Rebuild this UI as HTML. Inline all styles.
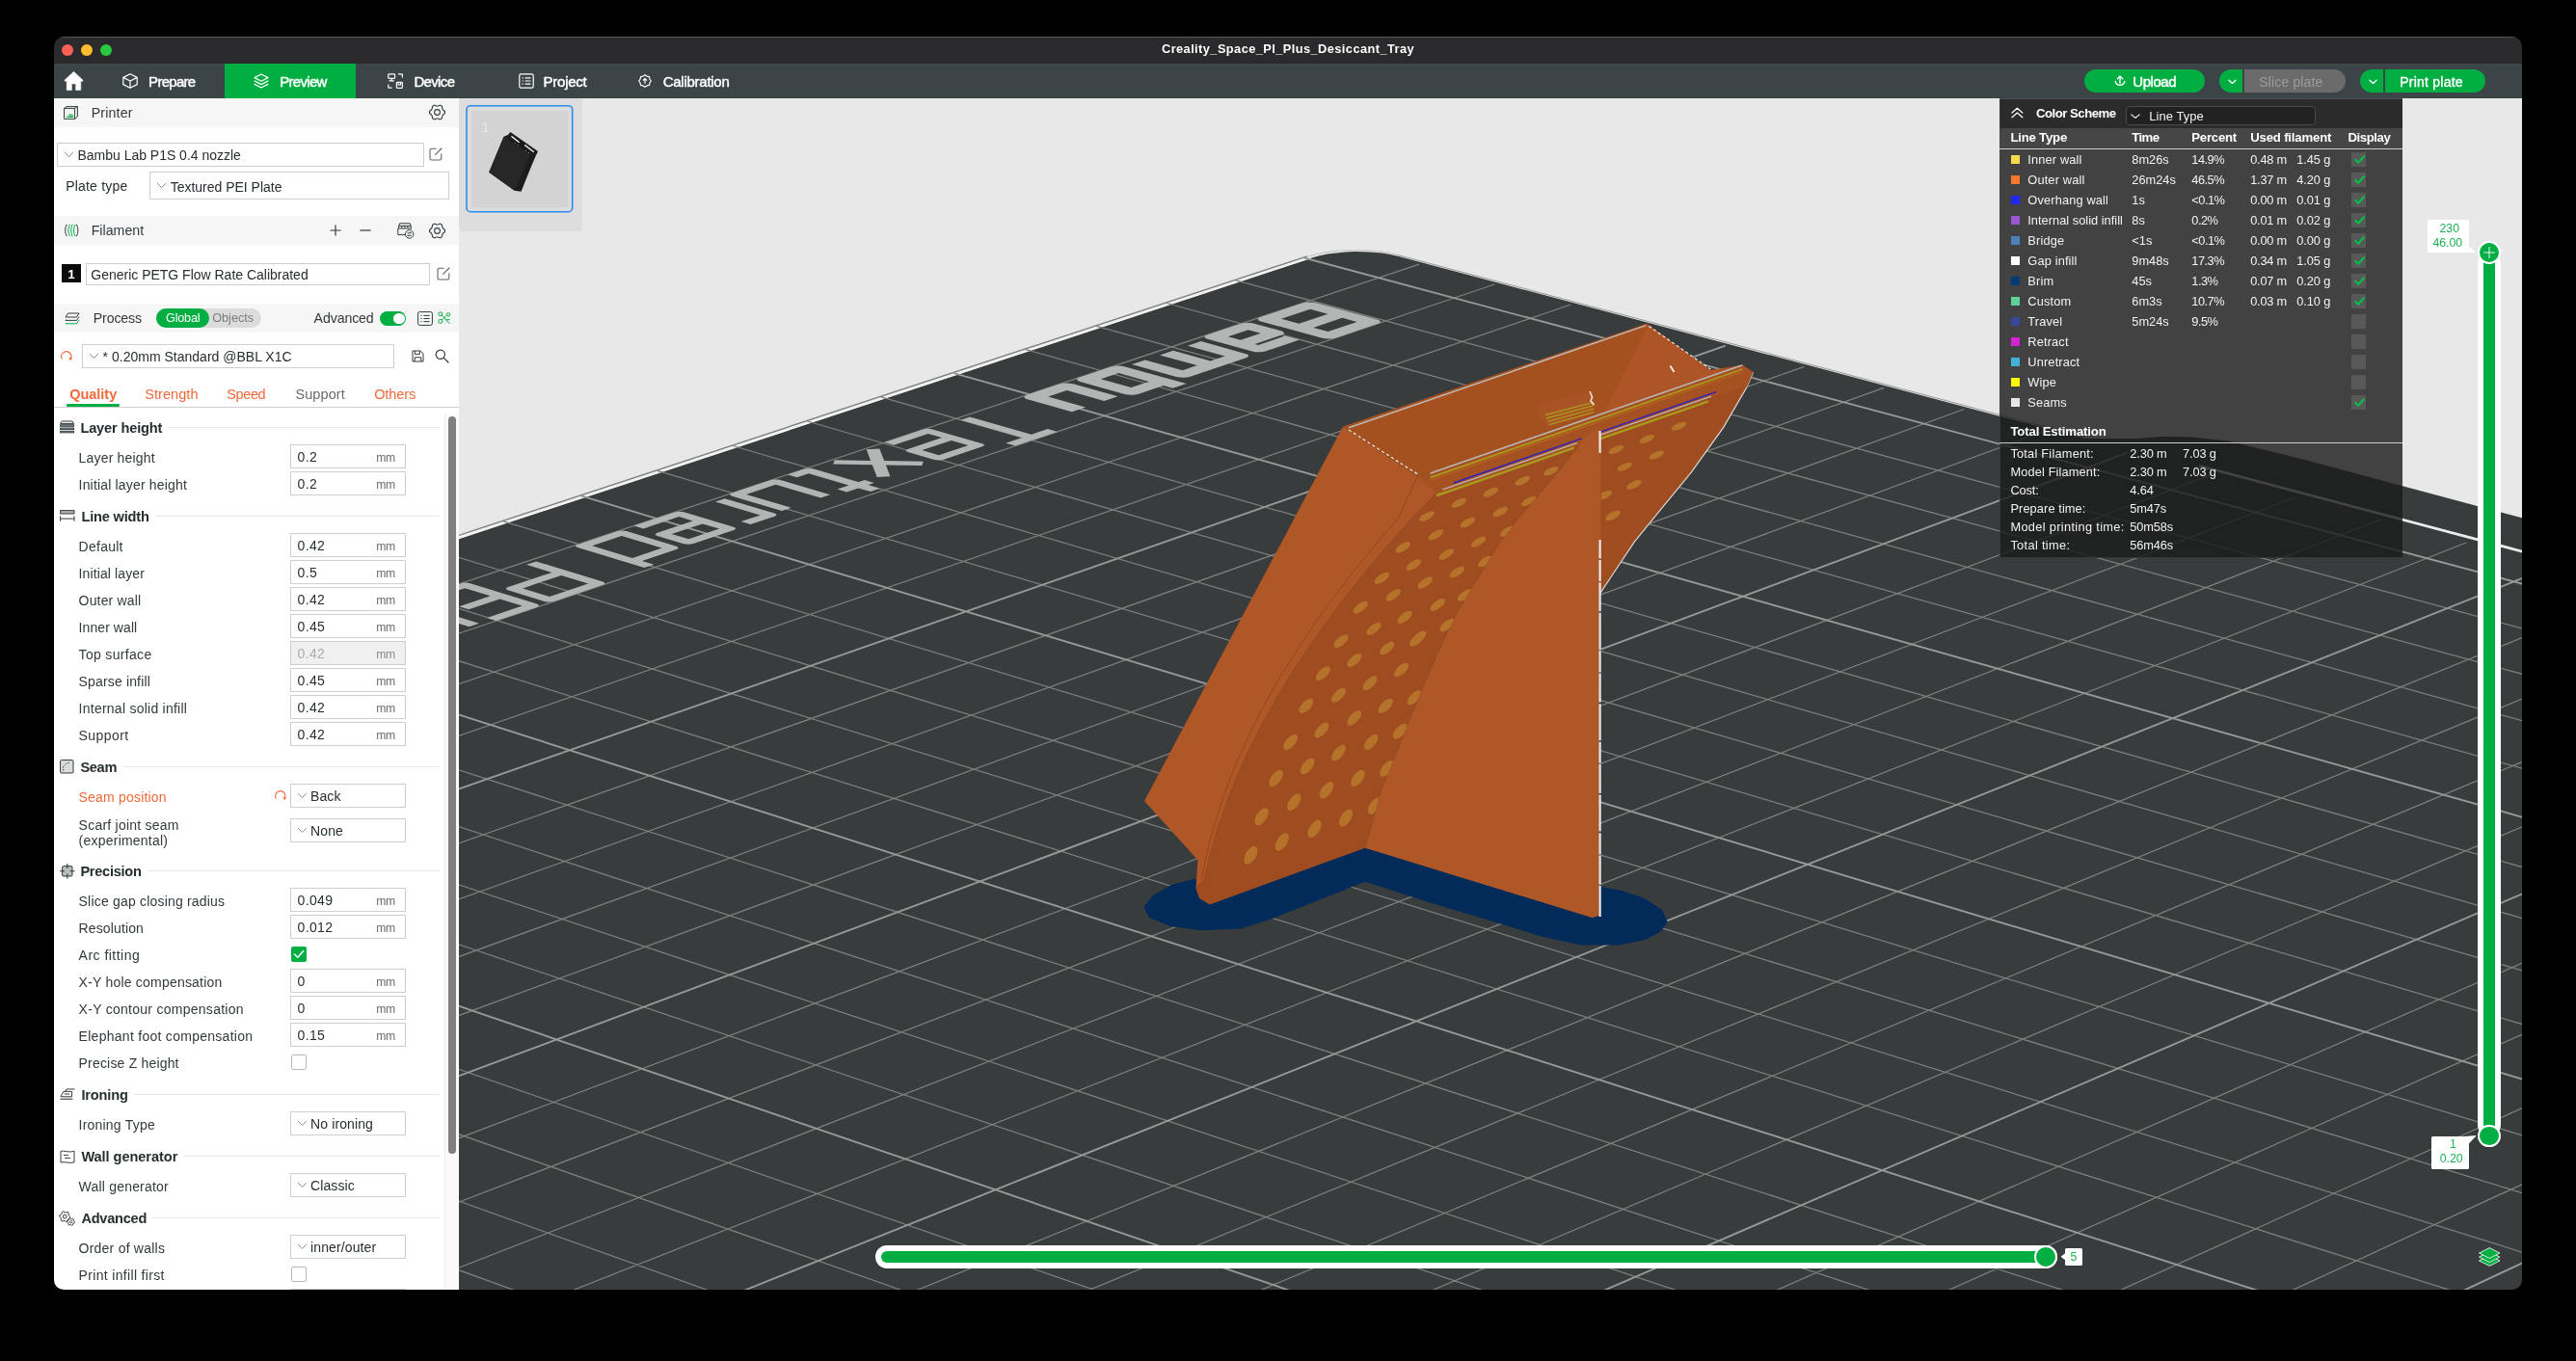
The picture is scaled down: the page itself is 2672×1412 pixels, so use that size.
<!DOCTYPE html><html><head><meta charset="utf-8"><title>Bambu Studio</title><style>
html,body{margin:0;padding:0;background:#000;}
body{width:2672px;height:1412px;overflow:hidden;position:relative;font-family:"Liberation Sans",sans-serif;color:#262e30;}
#win{position:absolute;left:0;top:0;width:2672px;height:1412px;clip-path:inset(38px 56px 74px 56px round 10px);background:#fff;will-change:transform;}
.abs{position:absolute;}
.t{position:absolute;white-space:nowrap;line-height:1;-webkit-font-smoothing:antialiased;}
svg{position:absolute;overflow:visible;}
#titlebar{position:absolute;left:56px;top:38px;width:2560px;height:28px;background:#2b2b2d;}
#tabbar{position:absolute;left:56px;top:66px;width:2560px;height:36px;background:#3b4446;}
#view{position:absolute;left:476px;top:102px;width:2140px;height:1236px;background:#e8e8e8;overflow:hidden;}
#side{position:absolute;left:56px;top:102px;width:420px;height:1236px;background:#fff;overflow:hidden;}
.hdr{position:absolute;left:0;width:420px;background:#f6f6f6;}
.box{position:absolute;border:1px solid #cfcfcf;background:#fff;box-sizing:border-box;}
.lbl{font-size:14.2px;color:#323a3d;}
.sec{font-size:14.8px;font-weight:bold;color:#262e30;}
.unit{font-size:12px;color:#6b6b6b;}
.val{font-size:14.2px;color:#262e30;}

</style></head><body>
<div id="win">
<div class="abs" style="left:56.00px;top:38.00px;width:2560.00px;height:28.00px;background:#2a2a2c;"></div>
<div class="abs" style="left:56.00px;top:38.00px;width:2560.00px;height:1.00px;background:#58585a;"></div>
<div class="abs" style="left:63.90px;top:45.90px;width:12.00px;height:12.00px;background:#fe5f57;border-radius:50%;"></div>
<div class="abs" style="left:83.90px;top:45.90px;width:12.00px;height:12.00px;background:#febc2e;border-radius:50%;"></div>
<div class="abs" style="left:104.00px;top:45.90px;width:12.00px;height:12.00px;background:#28c840;border-radius:50%;"></div>
<div class="t" style="left:1336.00px;width:0;display:flex;justify-content:center;top:45.16px;font-size:12.80px;color:#ffffff;letter-spacing:0.431px;font-weight:bold;"><span>Creality_Space_PI_Plus_Desiccant_Tray</span></div>
<div class="abs" style="left:56.00px;top:66.00px;width:2560.00px;height:36.00px;background:#3b4446;"></div>
<div class="abs" style="left:233.00px;top:66.00px;width:136.00px;height:36.00px;background:#00ae42;"></div>
<svg style="left:67.20px;top:74.20px;" width="19" height="20" viewBox="0 0 19 20"><path d="M9.5 0.3 L0.2 8.9 L0.2 10.3 L2.2 10.3 L2.2 19.6 L7.4 19.6 L7.4 13 L11.6 13 L11.6 19.6 L16.8 19.6 L16.8 10.3 L18.8 10.3 L18.8 8.9 Z" fill="#fff" stroke="#fff" stroke-width="0.5" stroke-linejoin="round"/></svg>
<svg style="left:126.80px;top:76.00px;" width="16" height="16" viewBox="0 0 16 16"><path d="M8 0.8 L15.2 4.4 L15.2 11.6 L8 15.2 L0.8 11.6 L0.8 4.4 Z M0.8 4.4 L8 8 L15.2 4.4 M8 8 L8 15.2" fill="none" stroke="#fff" stroke-width="1.2" stroke-linejoin="round"/></svg>
<div class="t" style="left:154.10px;top:76.80px;font-size:15.00px;color:#fff;letter-spacing:-0.711px;-webkit-text-stroke:0.45px #fff;">Prepare</div>
<svg style="left:262.90px;top:76.00px;" width="16" height="16" viewBox="0 0 16 16"><path d="M8 1 L15 4.6 L8 8.2 L1 4.6 Z M1 8 L8 11.6 L15 8 M1 11.4 L8 15 L15 11.4" fill="none" stroke="#fff" stroke-width="1.2" stroke-linejoin="round" stroke-linecap="round"/></svg>
<div class="t" style="left:290.20px;top:76.80px;font-size:15.00px;color:#fff;letter-spacing:-0.692px;-webkit-text-stroke:0.45px #fff;">Preview</div>
<svg style="left:402.10px;top:76.00px;" width="16.4" height="16" viewBox="0 0 16.4 16"><g fill="none" stroke="#fff" stroke-width="1.2"><rect x="0.8" y="0.8" width="6.8" height="4.6" rx="0.8"/><path d="M4.2 5.4 V7.6 M1.6 7.8 H6.8"/><path d="M11 0.8 H14.6 A0.8 0.8 0 0 1 15.4 1.6 V4.4 M0.8 11.4 V14.4 A0.8 0.8 0 0 0 1.6 15.2 H4.6"/><rect x="9.4" y="9.4" width="6" height="6" rx="0.8"/><path d="M11.2 9.6 V12 H13.6 V9.6"/></g></svg>
<div class="t" style="left:429.40px;top:76.80px;font-size:15.00px;color:#fff;letter-spacing:-0.650px;-webkit-text-stroke:0.45px #fff;">Device</div>
<svg style="left:537.70px;top:76.00px;" width="16" height="16" viewBox="0 0 16 16"><g fill="none" stroke="#fff" stroke-width="1.2"><rect x="0.8" y="0.8" width="14.4" height="14.4" rx="1.6"/><path d="M3.6 4.8 H4.8 M6.6 4.8 H12.4 M3.6 8 H4.8 M6.6 8 H12.4 M3.6 11.2 H4.8 M6.6 11.2 H12.4"/></g></svg>
<div class="t" style="left:563.60px;top:76.80px;font-size:15.00px;color:#fff;letter-spacing:-0.248px;-webkit-text-stroke:0.45px #fff;">Project</div>
<svg style="left:662.00px;top:77.00px;" width="14" height="14" viewBox="0 0 14 14"><g fill="none" stroke="#fff" stroke-width="1.2" stroke-linejoin="round"><polygon points="13.30,7.00 11.90,9.03 11.45,11.45 9.03,11.90 7.00,13.30 4.97,11.90 2.55,11.45 2.10,9.03 0.70,7.00 2.10,4.97 2.55,2.55 4.97,2.10 7.00,0.70 9.03,2.10 11.45,2.55 11.90,4.97"/><path d="M7 9.8 V4.6 M4.9 6.6 L7 4.4 L9.1 6.6"/></g></svg>
<div class="t" style="left:687.70px;top:76.80px;font-size:15.00px;color:#fff;letter-spacing:-0.261px;-webkit-text-stroke:0.45px #fff;">Calibration</div>
<div class="abs" style="left:2162.00px;top:72.00px;width:125.00px;height:24.00px;background:#00ae42;border-radius:12px;"></div>
<svg style="left:2192.80px;top:77.60px;" width="12" height="12.4" viewBox="0 0 12 12.4"><g fill="none" stroke="#fff" stroke-width="1.4" stroke-linecap="round" stroke-linejoin="round"><path d="M6 8.2 V1.2 M3.3 3.8 L6 1.1 L8.7 3.8 M1.2 6.4 A4.9 4.9 0 0 0 10.8 6.4"/></g></svg>
<div class="t" style="left:2212.30px;top:76.70px;font-size:15.00px;color:#fff;letter-spacing:-0.467px;-webkit-text-stroke:0.45px #fff;">Upload</div>
<div class="abs" style="left:2302.00px;top:72.00px;width:24.40px;height:24.00px;background:#00ae42;border-radius:12px 0 0 12px;"></div>
<div class="abs" style="left:2328.00px;top:72.00px;width:105.00px;height:24.00px;background:#6b6b6b;border-radius:0 12px 12px 0;"></div>
<svg style="left:2311.00px;top:81.60px;" width="9" height="6" viewBox="0 0 9 6"><path d="M1 1.2 L4.5 4.4 L8 1.2" fill="none" stroke="#fff" stroke-width="1.3" stroke-linecap="round" stroke-linejoin="round"/></svg>
<div class="t" style="left:2343.30px;top:77.65px;font-size:14.00px;color:#9c9c9c;letter-spacing:0.141px;">Slice plate</div>
<div class="abs" style="left:2448.00px;top:72.00px;width:24.40px;height:24.00px;background:#00ae42;border-radius:12px 0 0 12px;"></div>
<div class="abs" style="left:2474.00px;top:72.00px;width:104.00px;height:24.00px;background:#00ae42;border-radius:0 12px 12px 0;"></div>
<svg style="left:2457.00px;top:81.60px;" width="9" height="6" viewBox="0 0 9 6"><path d="M1 1.2 L4.5 4.4 L8 1.2" fill="none" stroke="#fff" stroke-width="1.3" stroke-linecap="round" stroke-linejoin="round"/></svg>
<div class="t" style="left:2489.20px;top:77.65px;font-size:14.00px;color:#fff;letter-spacing:0.236px;-webkit-text-stroke:0.35px #fff;">Print plate</div>
<div class="abs" style="left:476.00px;top:102.00px;width:2140.00px;height:1236.00px;background:#e8e8e8;"></div>
<svg style="left:476px;top:102px;overflow:hidden" width="2140" height="1236" viewBox="476 102 2140 1236"><polygon points="2159.2,454.7 2187.9,454.9 2215.8,454.9 2246.1,452.8 2273.5,453.5 2311.4,457.4 2387.8,476.3 2491.3,504.0 2569.5,525.0 2801.7,586.1 2739.8,611.3 2155.7,456.0" fill="#393c3c"/>
<path d="M-678.2,939.1 L-686.8,942.3 L-694.0,945.9 L-699.7,949.7 L-703.7,953.7 L-705.9,957.7 L-706.3,961.8 L-704.9,965.7 L-701.7,969.3 L-696.7,972.7 L-690.1,975.6 L1580.2,1814.2 L1591.2,1817.7 L1603.4,1820.4 L1616.4,1822.3 L1630.0,1823.3 L1643.8,1823.4 L1657.4,1822.6 L1670.6,1820.9 L1682.9,1818.4 L1694.1,1815.1 L1703.9,1811.1 L3659.5,882.1 L3664.9,879.0 L3668.6,875.5 L3670.6,871.8 L3670.8,868.0 L3669.1,864.1 L3665.7,860.2 L3660.7,856.5 L3654.1,853.0 L3646.1,849.8 L3637.0,847.0 L1450.0,265.8 L1442.2,264.0 L1433.6,262.6 L1424.4,261.7 L1414.7,261.2 L1404.9,261.1 L1395.2,261.5 L1385.8,262.4 L1376.9,263.6 L1368.7,265.3 L1361.6,267.3Z" fill="#393c3c"/>
<line x1="1359.7" y1="266.8" x2="-641.4" y2="925.7" stroke="#f2f2f2" stroke-width="2.6"/>
<line x1="1356.0" y1="265.8" x2="-645.1" y2="924.3" stroke="#7e8280" stroke-width="1.4"/>
<polyline points="1356.9,266.1 1364.5,264.0 1373.0,262.2 1382.3,260.9 1392.2,260.0 1402.4,259.6 1412.7,259.6 1422.9,260.2 1432.6,261.2 1441.6,262.6 1449.8,264.5" fill="none" stroke="#c4c7c6" stroke-width="1.2"/>
<line x1="1449.8" y1="264.5" x2="2161.9" y2="453.7" stroke="#8c908e" stroke-width="0.9"/>
<line x1="2281.3" y1="483.2" x2="2749.2" y2="607.4" stroke="#ececec" stroke-width="2.7"/><path d="M-643.9,978.9 L1472.2,274.2 M-624.9,918.3 L1739.1,1776.0 M-564.9,1008.0 L1550.3,295.0 M-529.2,886.8 L1833.2,1731.4 M-484.9,1037.5 L1629.3,316.0 M-434.9,855.8 L1925.7,1687.6 M-403.8,1067.3 L1709.1,337.2 M-341.9,825.2 L2016.7,1644.5 M-238.6,1128.2 L1871.4,380.4 M-159.7,765.2 L2194.4,1560.4 M-154.3,1159.2 L1953.9,402.3 M-70.4,735.8 L2281.1,1519.4 M-68.9,1190.7 L2037.4,424.5 M17.7,706.9 L2366.4,1479.0 M17.6,1222.5 L2121.7,446.9 M104.5,678.3 L2450.4,1439.2 M194.1,1287.5 L2293.3,492.6 M274.9,622.2 L2614.4,1361.6 M284.2,1320.7 L2380.6,515.8 M358.4,594.7 L2694.6,1323.6 M375.5,1354.3 L2468.8,539.2 M440.9,567.6 L2773.5,1286.2 M468.1,1388.4 L2558.1,563.0 M522.2,540.8 L2851.3,1249.4 M657.1,1458.0 L2739.8,611.3 M681.9,488.3 L3003.3,1177.5 M753.6,1493.6 L2832.2,635.9 M760.2,462.5 L3077.6,1142.3 M851.5,1529.6 L2925.7,660.8 M837.5,437.0 L3150.8,1107.6 M950.8,1566.2 L3020.3,685.9 M913.9,411.9 L3223.0,1073.4 M1153.7,1640.9 L3213.0,737.2 M1063.8,362.6 L3364.2,1006.6 M1257.4,1679.1 L3311.1,763.2 M1137.3,338.4 L3433.3,973.8 M1362.5,1717.8 L3410.4,789.6 M1210.0,314.5 L3501.5,941.6 M1469.3,1757.2 L3510.8,816.4 M1281.8,290.8 L3568.6,909.8" stroke="#7b807d" stroke-width="1.25" fill="none"/>
<path d="M-321.7,1097.6 L1789.8,358.7 M-250.2,795.0 L2106.3,1602.2 M105.3,1254.8 L2207.0,469.6 M190.3,650.0 L2533.0,1400.1 M561.9,1423.0 L2648.4,587.0 M602.6,514.4 L2927.8,1213.2 M1051.5,1603.3 L3116.1,711.4 M989.3,387.1 L3294.1,1039.7 M1577.7,1797.1 L3612.5,843.4 M1352.7,267.5 L3634.9,878.4" stroke="#959997" stroke-width="1.9" fill="none"/><path d="M1065.5,414.2 L1063.2,413.2 L1062.3,412.0 L1063.0,410.8 L1065.2,409.7 L1098.8,398.5 L1102.0,397.8 L1105.9,397.5 L1109.9,397.7 L1113.3,398.3 L1159.6,411.3 L1145.4,416.1 L1106.6,405.1 L1087.1,411.6 L1126.0,422.6 L1111.8,427.3 L1065.5,414.2Z M1310.0,365.0 L1306.1,365.3 L1302.2,365.2 L1298.8,364.6 L1252.6,351.8 L1250.3,350.9 L1249.4,349.7 L1250.0,348.5 L1252.1,347.5 L1286.8,335.9 L1290.0,335.2 L1293.8,334.9 L1297.7,335.1 L1301.1,335.7 L1328.8,343.2 L1331.1,344.2 L1332.1,345.4 L1331.5,346.5 L1329.4,347.6 L1301.6,356.9 L1305.1,357.9 L1332.9,348.5 L1347.9,352.6 L1313.2,364.3 L1310.0,365.0Z M1307.7,345.8 L1294.8,342.3 L1273.8,349.3 L1286.7,352.8 L1307.7,345.8Z M1255.6,374.5 L1270.6,369.5 L1231.8,358.7 L1245.7,354.1 L1291.9,366.9 L1294.2,367.8 L1295.2,369.0 L1294.5,370.2 L1292.5,371.3 L1234.7,390.7 L1231.4,391.4 L1227.6,391.7 L1223.6,391.6 L1220.2,390.9 L1174.0,378.0 L1187.9,373.4 L1226.7,384.2 L1241.7,379.1 L1203.0,368.4 L1216.9,363.7 L1255.6,374.5Z M1018.8,460.2 L1020.4,460.8 L1020.9,461.6 L1020.4,462.5 L1019.0,463.2 L978.9,476.7 L976.7,477.2 L974.0,477.4 L971.4,477.3 L969.1,476.9 L941.8,468.9 L940.2,468.3 L939.7,467.5 L940.2,466.6 L941.6,465.9 L977.0,454.1 L962.7,449.9 L927.3,461.7 L917.5,458.9 L957.7,445.5 L959.9,445.0 L962.5,444.8 L965.1,444.9 L967.3,445.4 L1018.8,460.2Z M956.3,467.1 L973.8,472.2 L1004.4,462.0 L986.8,456.9 L956.3,467.1Z M903.1,477.9 L898.7,466.3 L912.3,465.6 L917.2,478.1 L957.7,478.8 L956.4,483.1 L918.9,482.5 L923.4,494.2 L909.7,494.9 L904.8,482.3 L864.2,481.6 L865.7,477.3 L903.1,477.9Z M1170.0,409.6 L1166.6,408.9 L1120.3,395.9 L1118.0,394.9 L1117.1,393.8 L1117.8,392.5 L1120.0,391.5 L1152.5,380.6 L1155.8,379.9 L1159.7,379.6 L1163.6,379.8 L1167.0,380.4 L1230.6,398.1 L1216.5,402.8 L1206.7,400.1 L1181.2,408.7 L1177.9,409.4 L1174.0,409.7 L1170.0,409.6Z M1160.4,387.1 L1141.9,393.3 L1173.2,402.1 L1191.7,395.9 L1160.4,387.1Z M838.7,486.0 L841.4,486.2 L843.6,486.6 L890.2,500.3 L896.8,498.1 L906.7,500.9 L900.1,503.2 L912.6,506.8 L902.9,510.1 L890.4,506.4 L878.3,510.5 L868.5,507.6 L880.5,503.5 L838.8,491.3 L826.7,495.3 L816.9,492.4 L833.9,486.8 L836.1,486.3 L838.7,486.0Z M1429.3,335.7 L1385.7,350.5 L1382.5,351.2 L1378.7,351.5 L1374.8,351.3 L1371.4,350.7 L1307.9,333.4 L1305.6,332.4 L1304.7,331.3 L1305.3,330.1 L1307.3,329.1 L1351.0,314.5 L1354.2,313.8 L1358.0,313.5 L1361.9,313.7 L1365.2,314.3 L1428.6,331.4 L1431.0,332.4 L1431.9,333.5 L1431.3,334.7 L1429.3,335.7Z M1359.1,320.8 L1329.0,330.8 L1347.4,335.8 L1377.4,325.8 L1359.1,320.8Z M1392.3,329.8 L1362.2,339.9 L1377.6,344.1 L1407.6,334.0 L1392.3,329.8Z M1053.1,462.6 L1043.2,459.7 L1060.3,454.0 L996.4,435.7 L1005.9,432.5 L1069.8,450.8 L1086.8,445.1 L1096.6,447.9 L1053.1,462.6Z M759.3,514.7 L757.8,514.0 L757.2,513.2 L757.8,512.3 L759.3,511.6 L799.7,498.1 L802.0,497.6 L804.6,497.4 L807.3,497.5 L809.5,498.0 L861.1,513.2 L851.3,516.5 L804.6,502.7 L774.0,512.9 L820.7,526.7 L810.9,530.0 L759.3,514.7Z M761.0,546.8 L762.6,547.5 L763.1,548.3 L762.5,549.2 L761.0,549.9 L719.2,564.0 L716.9,564.5 L714.2,564.8 L711.5,564.6 L709.2,564.2 L681.7,555.9 L680.2,555.2 L679.7,554.4 L680.3,553.5 L681.8,552.8 L718.7,540.4 L704.4,536.1 L667.5,548.4 L657.6,545.5 L699.5,531.5 L701.8,531.0 L704.5,530.8 L707.2,530.9 L709.4,531.3 L761.0,546.8Z M696.7,554.1 L714.3,559.3 L746.2,548.6 L728.6,543.4 L696.7,554.1Z M291.6,707.5 L288.8,707.7 L286.1,707.6 L283.7,707.1 L232.0,690.5 L230.5,689.7 L230.1,688.8 L230.7,687.9 L232.4,687.1 L278.9,671.6 L281.3,671.0 L284.1,670.8 L286.9,670.9 L289.2,671.4 L319.7,681.2 L321.2,681.9 L321.7,682.8 L321.0,683.7 L319.4,684.5 L278.2,698.3 L289.5,701.9 L330.6,688.1 L340.6,691.3 L294.1,706.9 L291.6,707.5Z M304.2,683.1 L283.4,676.5 L247.6,688.5 L268.3,695.1 L304.2,683.1Z M227.8,725.9 L229.3,726.7 L229.7,727.6 L229.0,728.5 L227.4,729.4 L181.8,744.7 L179.3,745.3 L176.5,745.5 L173.7,745.4 L171.4,744.9 L143.8,735.9 L142.4,735.1 L141.9,734.2 L142.6,733.3 L144.3,732.4 L184.5,719.0 L170.1,714.3 L129.9,727.7 L120.1,724.5 L165.7,709.3 L168.1,708.7 L171.0,708.5 L173.7,708.6 L176.0,709.1 L227.8,725.9Z M159.7,733.9 L177.3,739.6 L212.0,728.0 L194.4,722.2 L159.7,733.9Z M778.5,544.1 L768.6,541.1 L788.6,534.4 L741.9,520.5 L751.8,517.2 L803.4,532.6 L804.9,533.2 L805.4,534.1 L804.9,534.9 L803.4,535.7 L778.5,544.1Z M597.2,566.5 L597.8,565.6 L599.3,564.9 L640.0,551.3 L642.3,550.8 L645.0,550.6 L647.7,550.7 L649.9,551.1 L701.6,566.8 L703.1,567.5 L703.6,568.3 L703.1,569.2 L701.5,569.9 L665.9,581.9 L678.4,585.7 L668.3,589.1 L599.2,568.1 L597.7,567.4 L597.2,566.5Z M686.6,568.6 L644.8,556.0 L614.2,566.2 L656.0,578.9 L686.6,568.6Z M208.7,695.9 L211.4,696.1 L213.7,696.5 L260.6,711.7 L267.9,709.2 L277.8,712.4 L270.5,714.9 L283.0,718.9 L272.2,722.5 L259.7,718.5 L246.4,723.0 L236.4,719.8 L249.8,715.3 L207.9,701.7 L194.5,706.2 L184.7,703.0 L203.4,696.7 L205.9,696.2 L208.7,695.9Z M477.7,605.4 L480.1,604.8 L482.8,604.6 L485.5,604.7 L487.8,605.2 L557.0,626.6 L558.5,627.3 L559.0,628.2 L558.4,629.1 L556.8,629.9 L515.0,644.0 L505.1,640.9 L541.7,628.6 L518.5,621.4 L486.1,632.2 L476.2,629.2 L508.6,618.3 L482.4,610.2 L445.8,622.4 L436.0,619.3 L477.7,605.4Z M486.6,650.3 L417.4,628.7 L427.8,625.2 L497.0,646.8 L486.6,650.3Z M366.5,690.8 L297.2,668.7 L307.8,665.2 L377.0,687.2 L366.5,690.8Z M574.9,623.8 L572.5,624.3 L569.8,624.6 L567.1,624.4 L564.8,624.0 L526.9,612.3 L525.4,611.6 L525.0,610.7 L525.5,609.8 L527.1,609.0 L572.4,593.9 L546.0,585.8 L556.2,582.4 L625.3,603.6 L626.8,604.3 L627.3,605.2 L626.8,606.1 L625.2,606.8 L574.9,623.8Z M542.1,610.4 L570.1,619.0 L610.2,605.5 L582.2,596.9 L542.1,610.4Z M395.3,684.3 L392.9,684.9 L390.2,685.1 L387.4,685.0 L385.1,684.5 L347.2,672.5 L345.7,671.7 L345.3,670.8 L345.9,669.9 L347.6,669.1 L394.1,653.6 L367.7,645.2 L378.2,641.7 L447.4,663.5 L448.9,664.3 L449.3,665.2 L448.7,666.1 L447.1,666.9 L395.3,684.3Z M362.7,670.5 L390.7,679.4 L431.9,665.5 L404.0,656.7 L362.7,670.5Z" fill="#b3b4b4" fill-rule="evenodd"/><defs><clipPath id="cpF"><polygon points="1490.4,510.8 1465.0,537.6 1440.9,564.3 1418.1,591.1 1396.6,617.8 1376.4,644.6 1357.4,671.4 1339.9,698.1 1323.6,724.9 1308.7,751.6 1295.2,778.4 1283.1,805.2 1272.4,831.9 1263.1,858.7 1255.3,885.4 1248.9,912.2 1240.5,922.0 1244.0,932.0 1254.9,938.5 1416.0,879.8 1419.8,867.3 1432.2,822.3 1452.2,772.4 1477.2,710.0 1499.7,660.0 1512.3,633.9 1532.5,600.8 1552.7,567.8 1574.7,538.4 1596.8,512.7 1626.1,477.8 1644.4,454.4"/></clipPath><clipPath id="cpR"><polygon points="1658.6,447.8 1818.5,386.1 1812.0,401.5 1787.7,443.4 1754.6,489.7 1723.8,527.1 1695.1,562.4 1673.1,595.5 1659.9,615.3 1658.6,615.3"/></clipPath></defs>
<polygon points="1239.9,911.5 1215.0,918.0 1196.0,929.0 1186.2,941.0 1192.0,952.0 1214.0,961.0 1244.9,965.2 1287.4,963.6 1320.0,953.0 1416.0,914.7 1489.8,938.5 1544.6,954.7 1598.5,971.5 1640.0,980.5 1680.0,980.6 1706.0,975.0 1722.0,967.0 1729.8,956.7 1724.0,944.0 1706.0,932.0 1682.0,924.0 1658.3,919.5 1655.6,940.0 1416.0,879.8 1253.3,930.0" fill="#022b5a"/>
<polygon points="1393.0,442.5 1187.0,831.1 1242.4,892.3 1240.5,922.0 1248.9,912.2 1255.3,885.4 1263.1,858.7 1272.4,831.9 1283.1,805.2 1295.2,778.4 1308.7,751.6 1323.6,724.9 1339.9,698.1 1357.4,671.4 1376.4,644.6 1396.6,617.8 1418.1,591.1 1440.9,564.3 1465.0,537.6 1490.4,510.8 1470.3,494.1" fill="#b05727"/>
<polyline points="1470.3,494.1 1450.4,537.6 1427.2,564.3 1405.2,591.1 1384.6,617.8 1365.2,644.6 1347.1,671.4 1330.4,698.1 1315.0,724.9 1300.9,751.6 1288.3,778.4 1277.1,805.2 1267.2,831.9 1258.8,858.7 1251.8,885.4 1246.3,912.2" fill="none" stroke="#8f4218" stroke-width="0.8"/>
<polygon points="1490.4,510.8 1465.0,537.6 1440.9,564.3 1418.1,591.1 1396.6,617.8 1376.4,644.6 1357.4,671.4 1339.9,698.1 1323.6,724.9 1308.7,751.6 1295.2,778.4 1283.1,805.2 1272.4,831.9 1263.1,858.7 1255.3,885.4 1248.9,912.2 1240.5,922.0 1244.0,932.0 1254.9,938.5 1416.0,879.8 1419.8,867.3 1432.2,822.3 1452.2,772.4 1477.2,710.0 1499.7,660.0 1512.3,633.9 1532.5,600.8 1552.7,567.8 1574.7,538.4 1596.8,512.7 1626.1,477.8 1644.4,454.4" fill="#9f4c20"/>
<g clip-path="url(#cpF)" fill="#b5722b"><ellipse cx="1608.7" cy="488.8" rx="8.4" ry="3.3" transform="rotate(-25 1608.7 488.8)"/><ellipse cx="1579.3" cy="498.9" rx="8.5" ry="3.4" transform="rotate(-26 1579.3 498.9)"/><ellipse cx="1546.2" cy="510.8" rx="8.6" ry="3.5" transform="rotate(-27 1546.2 510.8)"/><ellipse cx="1513.2" cy="521.8" rx="8.6" ry="3.5" transform="rotate(-28 1513.2 521.8)"/><ellipse cx="1480.1" cy="535.6" rx="8.7" ry="3.6" transform="rotate(-29 1480.1 535.6)"/><ellipse cx="1585.7" cy="520.0" rx="8.6" ry="3.5" transform="rotate(-28 1585.7 520.0)"/><ellipse cx="1556.3" cy="531.0" rx="8.6" ry="3.6" transform="rotate(-28 1556.3 531.0)"/><ellipse cx="1522.4" cy="542.0" rx="8.7" ry="3.6" transform="rotate(-29 1522.4 542.0)"/><ellipse cx="1489.3" cy="554.9" rx="8.8" ry="3.7" transform="rotate(-31 1489.3 554.9)"/><ellipse cx="1455.3" cy="567.8" rx="8.8" ry="3.8" transform="rotate(-32 1455.3 567.8)"/><ellipse cx="1563.7" cy="551.2" rx="8.7" ry="3.7" transform="rotate(-30 1563.7 551.2)"/><ellipse cx="1533.4" cy="562.3" rx="8.8" ry="3.7" transform="rotate(-31 1533.4 562.3)"/><ellipse cx="1500.3" cy="575.1" rx="8.9" ry="3.8" transform="rotate(-32 1500.3 575.1)"/><ellipse cx="1466.3" cy="586.1" rx="8.9" ry="3.9" transform="rotate(-33 1466.3 586.1)"/><ellipse cx="1433.3" cy="599.9" rx="9.0" ry="3.9" transform="rotate(-35 1433.3 599.9)"/><ellipse cx="1540.7" cy="582.5" rx="8.9" ry="3.8" transform="rotate(-33 1540.7 582.5)"/><ellipse cx="1511.3" cy="593.5" rx="9.0" ry="3.9" transform="rotate(-34 1511.3 593.5)"/><ellipse cx="1478.3" cy="604.5" rx="9.0" ry="4.0" transform="rotate(-35 1478.3 604.5)"/><ellipse cx="1445.2" cy="617.4" rx="9.1" ry="4.0" transform="rotate(-36 1445.2 617.4)"/><ellipse cx="1411.2" cy="630.2" rx="9.1" ry="4.1" transform="rotate(-37 1411.2 630.2)"/><ellipse cx="1519.6" cy="617.4" rx="9.1" ry="4.0" transform="rotate(-36 1519.6 617.4)"/><ellipse cx="1491.1" cy="627.5" rx="9.1" ry="4.1" transform="rotate(-37 1491.1 627.5)"/><ellipse cx="1457.1" cy="640.3" rx="9.2" ry="4.2" transform="rotate(-38 1457.1 640.3)"/><ellipse cx="1425.0" cy="652.3" rx="9.2" ry="4.2" transform="rotate(-39 1425.0 652.3)"/><ellipse cx="1391.0" cy="665.1" rx="9.3" ry="4.3" transform="rotate(-40 1391.0 665.1)"/><ellipse cx="1501.2" cy="648.6" rx="9.2" ry="4.2" transform="rotate(-39 1501.2 648.6)"/><ellipse cx="1471.8" cy="661.4" rx="9.3" ry="4.3" transform="rotate(-40 1471.8 661.4)"/><ellipse cx="1438.8" cy="672.5" rx="9.3" ry="4.3" transform="rotate(-41 1438.8 672.5)"/><ellipse cx="1469.7" cy="663.7" rx="9.3" ry="4.3" transform="rotate(-40 1469.7 663.7)"/><ellipse cx="1404.8" cy="685.0" rx="9.4" ry="4.4" transform="rotate(-42 1404.8 685.0)"/><ellipse cx="1453.5" cy="695.0" rx="9.4" ry="4.5" transform="rotate(-43 1453.5 695.0)"/><ellipse cx="1372.3" cy="698.7" rx="9.5" ry="4.5" transform="rotate(-43 1372.3 698.7)"/><ellipse cx="1421.0" cy="708.7" rx="9.5" ry="4.5" transform="rotate(-44 1421.0 708.7)"/><ellipse cx="1467.2" cy="723.7" rx="9.6" ry="4.6" transform="rotate(-45 1467.2 723.7)"/><ellipse cx="1388.5" cy="721.2" rx="9.6" ry="4.6" transform="rotate(-45 1388.5 721.2)"/><ellipse cx="1354.8" cy="732.4" rx="9.6" ry="4.7" transform="rotate(-46 1354.8 732.4)"/><ellipse cx="1437.2" cy="732.4" rx="9.6" ry="4.7" transform="rotate(-46 1437.2 732.4)"/><ellipse cx="1404.8" cy="744.9" rx="9.7" ry="4.7" transform="rotate(-47 1404.8 744.9)"/><ellipse cx="1371.0" cy="757.4" rx="9.8" ry="4.8" transform="rotate(-48 1371.0 757.4)"/><ellipse cx="1452.2" cy="758.7" rx="9.8" ry="4.8" transform="rotate(-48 1452.2 758.7)"/><ellipse cx="1338.6" cy="769.9" rx="9.8" ry="4.9" transform="rotate(-49 1338.6 769.9)"/><ellipse cx="1422.2" cy="769.9" rx="9.8" ry="4.9" transform="rotate(-49 1422.2 769.9)"/><ellipse cx="1388.5" cy="781.1" rx="9.9" ry="4.9" transform="rotate(-50 1388.5 781.1)"/><ellipse cx="1356.1" cy="794.9" rx="9.9" ry="5.0" transform="rotate(-52 1356.1 794.9)"/><ellipse cx="1438.5" cy="797.4" rx="9.9" ry="5.0" transform="rotate(-52 1438.5 797.4)"/><ellipse cx="1323.6" cy="807.4" rx="10.0" ry="5.1" transform="rotate(-53 1323.6 807.4)"/><ellipse cx="1408.5" cy="807.4" rx="10.0" ry="5.1" transform="rotate(-53 1408.5 807.4)"/><ellipse cx="1376.0" cy="819.8" rx="10.1" ry="5.1" transform="rotate(-54 1376.0 819.8)"/><ellipse cx="1342.3" cy="832.3" rx="10.1" ry="5.2" transform="rotate(-55 1342.3 832.3)"/><ellipse cx="1426.0" cy="836.1" rx="10.1" ry="5.2" transform="rotate(-55 1426.0 836.1)"/><ellipse cx="1308.6" cy="847.3" rx="10.2" ry="5.3" transform="rotate(-56 1308.6 847.3)"/><ellipse cx="1396.0" cy="848.6" rx="10.2" ry="5.3" transform="rotate(-56 1396.0 848.6)"/><ellipse cx="1363.6" cy="859.8" rx="10.3" ry="5.3" transform="rotate(-57 1363.6 859.8)"/><ellipse cx="1329.8" cy="873.5" rx="10.3" ry="5.4" transform="rotate(-59 1329.8 873.5)"/><ellipse cx="1297.4" cy="887.3" rx="10.4" ry="5.5" transform="rotate(-60 1297.4 887.3)"/></g>
<polygon points="1658.6,447.8 1818.5,386.1 1812.0,401.5 1787.7,443.4 1754.6,489.7 1723.8,527.1 1695.1,562.4 1673.1,595.5 1659.9,615.3 1658.6,615.3" fill="#9f4c20"/>
<g clip-path="url(#cpR)" fill="#b5722b"><ellipse cx="1741.4" cy="442.3" rx="8.4" ry="3.3" transform="rotate(-24 1741.4 442.3)"/><ellipse cx="1708.3" cy="455.5" rx="8.4" ry="3.3" transform="rotate(-24 1708.3 455.5)"/><ellipse cx="1676.4" cy="466.5" rx="8.4" ry="3.3" transform="rotate(-24 1676.4 466.5)"/><ellipse cx="1718.3" cy="472.0" rx="8.4" ry="3.3" transform="rotate(-24 1718.3 472.0)"/><ellipse cx="1685.2" cy="484.2" rx="8.4" ry="3.3" transform="rotate(-24 1685.2 484.2)"/><ellipse cx="1695.1" cy="502.9" rx="8.5" ry="3.4" transform="rotate(-26 1695.1 502.9)"/><ellipse cx="1664.3" cy="513.9" rx="8.6" ry="3.5" transform="rotate(-27 1664.3 513.9)"/><ellipse cx="1673.1" cy="534.9" rx="8.7" ry="3.6" transform="rotate(-29 1673.1 534.9)"/></g>
<polyline points="1818.5,386.1 1812.0,401.5 1787.7,443.4 1754.6,489.7 1723.8,527.1 1695.1,562.4 1673.1,595.5 1659.9,615.3" fill="none" stroke="#d8d0cc" stroke-width="1.3"/>
<polygon points="1708.3,335.4 1393.0,442.5 1470.3,494.1 1483.6,490.8 1807.5,378.4 1774.4,383.9" fill="#a5501f"/>
<polygon points="1709.4,338.0 1774.4,383.9 1800.0,380.5 1664.3,427.5" fill="#ad5526"/>
<polygon points="1594.0,424.5 1600.0,418.5 1648.0,406.5 1654.0,410.0 1655.0,428.0 1606.0,442.5 1598.0,436.0" fill="#aa5324"/>
<path d="M1603,430.5 L1653,417.3 M1604,434 L1653,420.7 M1605.5,437.4 L1653,424.2 M1607,440.6 L1653,427.6" stroke="#a99a1e" stroke-width="1.3" fill="none"/>
<path d="M1649,406 L1651.5,412 L1650,416 L1653.5,420" stroke="#f2f2f2" stroke-width="1.4" fill="none"/>
<path d="M1732.5,379.5 L1736.5,386" stroke="#f2f2f2" stroke-width="1.8" fill="none"/>
<polygon points="1644.4,454.4 1626.1,477.8 1596.8,512.7 1574.7,538.4 1552.7,567.8 1532.5,600.8 1512.3,633.9 1499.7,660.0 1477.2,710.0 1452.2,772.4 1432.2,822.3 1419.8,867.3 1416.0,879.8 1652.0,952.2 1658.6,949.7 1658.6,447.8" fill="#b05727"/>
<polygon points="1470.3,494.1 1483.6,490.8 1807.5,378.4 1818.5,386.1 1812.0,401.5 1781.0,410.0 1490.2,516.1 1488.4,510.8" fill="#a65122"/>
<line x1="1483.6" y1="491.1" x2="1807.5" y2="378.7" stroke="#b9b6b4" stroke-width="1.6"/>
<line x1="1483.6" y1="495.4" x2="1807.5" y2="383.0" stroke="#a99a1e" stroke-width="1.8"/>
<line x1="1483.6" y1="498.2" x2="1807.5" y2="385.8" stroke="#b8661f" stroke-width="1.2"/>
<line x1="1507.9" y1="501.0" x2="1640.7" y2="454.9" stroke="#2a22c4" stroke-width="1.5"/>
<line x1="1660.1" y1="448.1" x2="1780.0" y2="406.6" stroke="#2a22c4" stroke-width="1.5"/>
<line x1="1496.6" y1="507.9" x2="1635.8" y2="459.6" stroke="#b9b6b4" stroke-width="1.3"/>
<line x1="1490.1" y1="514.2" x2="1632.6" y2="464.7" stroke="#a99a1e" stroke-width="2.4"/>
<line x1="1660.1" y1="451.1" x2="1775.1" y2="411.2" stroke="#b9b6b4" stroke-width="1.3"/>
<line x1="1653.6" y1="457.4" x2="1771.9" y2="416.4" stroke="#a99a1e" stroke-width="2.4"/>
<polygon points="1644.4,454.4 1652.0,446.5 1658.6,445.0 1658.6,470.0 1630.0,473.0" fill="#b05727"/>
<line x1="1399.0" y1="443.7" x2="1707.3" y2="337.6" stroke="#bdb9b6" stroke-width="1.5"/>
<line x1="1399.0" y1="446.0" x2="1472.3" y2="493.1" stroke="#e4e0dd" stroke-width="1.3" stroke-dasharray="3.2 2.6"/>
<line x1="1710.3" y1="338.4" x2="1774.4" y2="383.0" stroke="#e4e0dd" stroke-width="1.3" stroke-dasharray="3.2 2.6"/>
<line x1="1659.6" y1="447" x2="1659.6" y2="951" stroke="#ece9e7" stroke-width="2.2" stroke-dasharray="38 1.6 22 1.2 30 1.6"/>
<line x1="1659.6" y1="470" x2="1659.6" y2="560" stroke="#a85322" stroke-width="3"/></svg>
<div class="abs" style="left:476.00px;top:102.00px;width:128.00px;height:138.10px;background:#dddddd;border-radius:0 0 4px 4px;"></div>
<svg style="left:480.00px;top:106.00px;" width="118" height="118" viewBox="0 0 118 118"><rect x="4" y="3.7" width="109.7" height="110" rx="4" fill="#dcdcdc" stroke="#2a8cf0" stroke-width="1.6"/></svg>
<div class="abs" style="left:488.90px;top:114.90px;width:100.30px;height:100.10px;background:#d3d3d3;"></div>
<div class="t" style="left:499.60px;top:124.63px;font-size:14.50px;color:#e9e9e9;">1</div>
<svg style="left:476.00px;top:102.00px;" width="140" height="144" viewBox="0 0 140 144"><g transform="scale(0.10582)"><polygon points="440,375 480,360 505,330 775,520 755,560 700,690 610,915 545,905 295,725" fill="#1c1c1c"/><polygon points="440,375 700,545 680,600 545,905 295,725" fill="#272727"/><path d="M515,372 L592,432 M645,457 L735,527" stroke="#f0f0f0" stroke-width="13"/><path d="M548,436 l6,5 M578,456 l6,5 M655,512 l6,5 M683,532 l6,5" stroke="#e0e0e0" stroke-width="7"/></g></svg>
<div class="abs" style="left:56.00px;top:102.00px;width:420.00px;height:1236.00px;background:#fff;"></div>
<div class="abs" style="left:56.00px;top:102.00px;width:420.00px;height:29.70px;background:#f6f6f6;"></div>
<svg style="left:66.00px;top:109.60px;" width="15" height="14" viewBox="0 0 15 14"><g fill="none" stroke="#323a3d" stroke-width="1"><path d="M0.6 2.4 H11.6 V13.4 H0.6 Z M0.6 2.4 L3 0.6 H14.4 L11.6 2.4 M14.4 0.6 V11 L11.6 13.4"/></g><path d="M3 11.4 L9.6 10.2 V11.4 Z" fill="#00ae42" stroke="#00ae42" stroke-width="0.8"/><path d="M5 9 H9.6" stroke="#00ae42" stroke-width="1"/></svg>
<div class="t" style="left:94.70px;top:109.58px;font-size:14.20px;color:#323a3d;letter-spacing:0.162px;">Printer</div>
<svg style="left:444.50px;top:108.30px;" width="17" height="17" viewBox="0 0 17 17"><polygon points="16.43,7.46 16.43,9.55 14.60,11.03 13.73,12.52 13.36,14.85 11.55,15.89 9.36,15.04 7.63,15.04 5.43,15.89 3.62,14.84 3.26,12.51 2.40,11.02 0.57,9.54 0.57,7.45 2.40,5.97 3.27,4.48 3.64,2.15 5.45,1.11 7.64,1.96 9.37,1.96 11.57,1.11 13.38,2.16 13.74,4.49 14.60,5.98" fill="none" stroke="#323a3d" stroke-width="1.1" stroke-linejoin="round"/><circle cx="8.5" cy="8.5" r="2.9" fill="none" stroke="#323a3d" stroke-width="1.1"/></svg>
<div class="abs" style="left:59.30px;top:148.40px;width:381.20px;height:24.20px;background:#fff;border:1px solid #cecece;box-sizing:border-box;"></div><svg style="left:66.60px;top:157.90px;" width="9" height="5.6" viewBox="0 0 9 5.6"><path d="M0.5 0.5 L4.5 4.6 L8.5 0.5" fill="none" stroke="#8c8c8c" stroke-width="1" stroke-linecap="round" stroke-linejoin="round"/></svg><div class="t" style="left:80.50px;top:153.85px;font-size:14.00px;color:#262e30;letter-spacing:-0.016px;">Bambu Lab P1S 0.4 nozzle</div>
<svg style="left:445.00px;top:153.40px;" width="14" height="14" viewBox="0 0 14 14"><path d="M7.2 1.2 H2.6 A1.6 1.6 0 0 0 1 2.8 V11.4 A1.6 1.6 0 0 0 2.6 13 H11.2 A1.6 1.6 0 0 0 12.8 11.4 V6.8 M6.6 7.4 L13 1" fill="none" stroke="#5c6467" stroke-width="1.1" stroke-linecap="round"/></svg>
<div class="t" style="left:68.20px;top:185.75px;font-size:14.00px;color:#262e30;letter-spacing:0.193px;">Plate type</div>
<div class="abs" style="left:155.30px;top:178.30px;width:310.40px;height:29.10px;background:#fff;border:1px solid #cecece;box-sizing:border-box;"></div><svg style="left:162.60px;top:190.25px;" width="9" height="5.6" viewBox="0 0 9 5.6"><path d="M0.5 0.5 L4.5 4.6 L8.5 0.5" fill="none" stroke="#8c8c8c" stroke-width="1" stroke-linecap="round" stroke-linejoin="round"/></svg><div class="t" style="left:176.70px;top:186.55px;font-size:14.00px;color:#262e30;letter-spacing:-0.009px;">Textured PEI Plate</div>
<div class="abs" style="left:56.00px;top:224.10px;width:420.00px;height:29.70px;background:#f6f6f6;"></div>
<svg style="left:67.00px;top:232.00px;" width="15" height="14" viewBox="0 0 15 14"><g fill="none" stroke-width="1"><path d="M2.4 0.8 C0.2 3.6 0.2 10.4 2.4 13.2" stroke="#323a3d"/><path d="M5.6 0.8 C3.4 3.6 3.4 10.4 5.6 13.2 M8.4 0.8 C6.2 3.6 6.2 10.4 8.4 13.2 M11.2 0.8 C9 3.6 9 10.4 11.2 13.2" stroke="#00ae42"/><path d="M12.2 0.8 C14.4 3.6 14.4 10.4 12.2 13.2" stroke="#323a3d"/></g></svg>
<div class="t" style="left:94.70px;top:231.58px;font-size:14.20px;color:#323a3d;letter-spacing:0.007px;">Filament</div>
<svg style="left:342.00px;top:233.30px;" width="12" height="12" viewBox="0 0 12 12"><path d="M6 0.4 V11.6 M0.4 6 H11.6" stroke="#323a3d" stroke-width="1.2"/></svg>
<svg style="left:372.70px;top:233.30px;" width="12" height="12" viewBox="0 0 12 12"><path d="M0.4 6 H11.6" stroke="#323a3d" stroke-width="1.2"/></svg>
<svg style="left:412.00px;top:230.60px;" width="17.6" height="17" viewBox="0 0 17.6 17"><g fill="none" stroke="#323a3d" stroke-width="1"><path d="M1.6 3.4 H14.2 V5.8 M1.6 3.4 V5.8 M1.6 3.4 L2.6 0.8 H13.2 L14.2 3.4 M4.8 3.4 V5.6 M7.9 3.4 V5.6 M11 3.4 V5.6 M0.8 6 H15 M0.8 6 V12.6 H9"/><circle cx="12.6" cy="12" r="4.2" fill="#fff"/><path d="M10.4 10.8 H14.6 L13.4 9.6 M14.8 13.2 H10.6 L11.8 14.4"/></g></svg>
<svg style="left:444.50px;top:230.50px;" width="17" height="17" viewBox="0 0 17 17"><polygon points="16.43,7.46 16.43,9.55 14.60,11.03 13.73,12.52 13.36,14.85 11.55,15.89 9.36,15.04 7.63,15.04 5.43,15.89 3.62,14.84 3.26,12.51 2.40,11.02 0.57,9.54 0.57,7.45 2.40,5.97 3.27,4.48 3.64,2.15 5.45,1.11 7.64,1.96 9.37,1.96 11.57,1.11 13.38,2.16 13.74,4.49 14.60,5.98" fill="none" stroke="#323a3d" stroke-width="1.1" stroke-linejoin="round"/><circle cx="8.5" cy="8.5" r="2.9" fill="none" stroke="#323a3d" stroke-width="1.1"/></svg>
<div class="abs" style="left:63.90px;top:274.30px;width:20.00px;height:19.20px;background:#0a0a0a;"></div>
<div class="t" style="left:73.90px;width:0;display:flex;justify-content:center;top:278.17px;font-size:13.50px;color:#fff;font-weight:bold;"><span>1</span></div>
<div class="abs" style="left:89.10px;top:272.50px;width:357.40px;height:23.80px;background:#fff;border:1px solid #cecece;box-sizing:border-box;"></div><div class="t" style="left:94.30px;top:277.95px;font-size:14.00px;color:#262e30;letter-spacing:-0.008px;">Generic PETG Flow Rate Calibrated</div>
<svg style="left:452.80px;top:277.40px;" width="14" height="14" viewBox="0 0 14 14"><path d="M7.2 1.2 H2.6 A1.6 1.6 0 0 0 1 2.8 V11.4 A1.6 1.6 0 0 0 2.6 13 H11.2 A1.6 1.6 0 0 0 12.8 11.4 V6.8 M6.6 7.4 L13 1" fill="none" stroke="#5c6467" stroke-width="1.1" stroke-linecap="round"/></svg>
<div class="abs" style="left:56.00px;top:314.90px;width:420.00px;height:30.00px;background:#f6f6f6;"></div>
<svg style="left:67.00px;top:323.60px;" width="16" height="13" viewBox="0 0 16 13"><g fill="none" stroke-width="1" stroke-linejoin="round"><path d="M3.6 1 H15 L12.4 5 H1 Z" stroke="#323a3d"/><path d="M1.4 7.6 L1 8.4 H12.4 L15 4.6" stroke="#323a3d"/><path d="M1.4 11 L1 11.8 H12.4 L15 8" stroke="#00ae42"/></g></svg>
<div class="t" style="left:96.80px;top:323.18px;font-size:14.20px;color:#323a3d;letter-spacing:-0.166px;">Process</div>
<div class="abs" style="left:161.80px;top:320.40px;width:109.00px;height:19.60px;background:#dcdcdc;border-radius:10px;"></div>
<div class="abs" style="left:161.80px;top:320.40px;width:55.50px;height:19.60px;background:#00ae42;border-radius:10px;"></div>
<div class="t" style="left:172.00px;top:324.33px;font-size:12.60px;color:#fff;letter-spacing:-0.165px;">Global</div>
<div class="t" style="left:220.20px;top:324.33px;font-size:12.60px;color:#7c7c7c;letter-spacing:0.047px;">Objects</div>
<div class="t" style="left:325.60px;top:323.18px;font-size:14.20px;color:#323a3d;letter-spacing:-0.137px;">Advanced</div>
<div class="abs" style="left:394.10px;top:323.20px;width:27.30px;height:14.70px;background:#00ae42;border-radius:7.4px;"></div>
<div class="abs" style="left:408.20px;top:324.70px;width:11.70px;height:11.70px;background:#fff;border-radius:50%;"></div>
<svg style="left:433.00px;top:322.70px;" width="16" height="15" viewBox="0 0 16 15"><g fill="none" stroke="#323a3d" stroke-width="1"><rect x="0.6" y="0.6" width="14.8" height="13.8" rx="1.8"/><path d="M3.4 4.4 H4.6 M6.4 4.4 H12.6 M3.4 7.5 H4.6 M6.4 7.5 H12.6 M3.4 10.6 H4.6 M6.4 10.6 H12.6"/></g></svg>
<svg style="left:453.60px;top:323.40px;" width="14" height="14" viewBox="0 0 14 14"><g fill="none" stroke="#00ae42" stroke-width="1"><circle cx="2.8" cy="2.8" r="2"/><circle cx="2.8" cy="10.4" r="2"/><circle cx="11" cy="3.4" r="1.7"/><path d="M4.4 4 L12.4 12.8 M4.4 9.2 L8.6 4.6 M8.8 8.8 L12.6 8.6"/></g></svg>
<svg style="left:61.80px;top:362.90px;" width="14" height="14" viewBox="0 0 14 14"><path d="M2.2 9.2 A5.2 5.2 0 1 1 11.2 9.6" fill="none" stroke="#f0693a" stroke-width="1.1" stroke-linecap="round"/><path d="M9 8.6 L11.5 10.9 L13 7.8 Z" fill="#f0693a"/></svg>
<div class="abs" style="left:85.30px;top:357.40px;width:324.20px;height:24.20px;background:#fff;border:1px solid #cecece;box-sizing:border-box;"></div><svg style="left:92.60px;top:366.90px;" width="9" height="5.6" viewBox="0 0 9 5.6"><path d="M0.5 0.5 L4.5 4.6 L8.5 0.5" fill="none" stroke="#8c8c8c" stroke-width="1" stroke-linecap="round" stroke-linejoin="round"/></svg><div class="t" style="left:106.60px;top:362.95px;font-size:14.00px;color:#262e30;letter-spacing:0.008px;">* 0.20mm Standard @BBL X1C</div>
<svg style="left:427.00px;top:363.20px;" width="13" height="13" viewBox="0 0 13 13"><g fill="none" stroke="#323a3d" stroke-width="1" stroke-linejoin="round"><path d="M1 1 H9.2 L12 3.8 V12 H1 Z M3.4 1 V4.4 H8.4 V1 M3.2 12 V7.8 H9.8 V12"/></g></svg>
<svg style="left:450.60px;top:362.00px;" width="15" height="15" viewBox="0 0 15 15"><g fill="none" stroke="#323a3d" stroke-width="1.2" stroke-linecap="round"><circle cx="5.8" cy="5.8" r="4.6"/><path d="M9.2 9.2 L14 14"/></g></svg>
<div class="t" style="left:72.30px;top:401.83px;font-size:14.50px;color:#f0693a;letter-spacing:-0.042px;font-weight:bold;">Quality</div>
<div class="abs" style="left:69.20px;top:419.30px;width:54.50px;height:2.40px;background:#00ae42;border-radius:1.2px;"></div>
<div class="t" style="left:150.20px;top:401.83px;font-size:14.50px;color:#f0693a;letter-spacing:0.069px;">Strength</div>
<div class="t" style="left:235.20px;top:401.83px;font-size:14.50px;color:#f0693a;letter-spacing:-0.357px;">Speed</div>
<div class="t" style="left:306.40px;top:401.83px;font-size:14.50px;color:#6b6b6b;letter-spacing:0.102px;">Support</div>
<div class="t" style="left:388.20px;top:401.83px;font-size:14.50px;color:#f0693a;letter-spacing:-0.103px;">Others</div>
<div class="abs" style="left:56.00px;top:422.00px;width:420.00px;height:1.00px;background:#cecece;"></div>
<div class="abs" style="left:461.30px;top:429.00px;width:14.70px;height:909.00px;background:#fafafa;border-left:1px solid #ededed;box-sizing:border-box;"></div>
<div class="abs" style="left:464.90px;top:431.90px;width:8.00px;height:765.40px;background:#7f7f7f;border-radius:4px;"></div>
<svg style="left:62.00px;top:436.10px;" width="15.2" height="14.4" viewBox="0 0 15.2 14.4"><path d="M2.2 1 H13 L14.6 3.4 H0.6 Z" fill="none" stroke="#323a3d" stroke-width="1"/><g fill="#8f9496" stroke="#323a3d" stroke-width="0.9"><rect x="0.6" y="4.7" width="14" height="1.6"/><rect x="0.6" y="8" width="14" height="1.6"/><rect x="0.6" y="11.3" width="14" height="1.6"/></g></svg>
<div class="t" style="left:83.40px;top:436.74px;font-size:14.60px;color:#262e30;letter-spacing:-0.156px;font-weight:bold;">Layer height</div>
<div class="abs" style="left:174.10px;top:443.00px;width:281.90px;height:1.00px;background:#e8e8e8;"></div>
<div class="t" style="left:81.60px;top:467.75px;font-size:14.00px;color:#323a3d;letter-spacing:0.186px;">Layer height</div>
<div class="abs" style="left:301.00px;top:461.30px;width:119.70px;height:24.40px;background:#fff;border:1px solid #cecece;box-sizing:border-box;"></div><div class="t" style="left:308.60px;top:466.75px;font-size:14.00px;color:#262e30;letter-spacing:0.350px;">0.2</div><div class="t" style="left:390.30px;top:469.27px;font-size:12.20px;color:#6b6b6b;letter-spacing:-0.326px;">mm</div>
<div class="t" style="left:81.60px;top:495.75px;font-size:14.00px;color:#323a3d;letter-spacing:0.176px;">Initial layer height</div>
<div class="abs" style="left:301.00px;top:489.30px;width:119.70px;height:24.40px;background:#fff;border:1px solid #cecece;box-sizing:border-box;"></div><div class="t" style="left:308.60px;top:494.75px;font-size:14.00px;color:#262e30;letter-spacing:0.350px;">0.2</div><div class="t" style="left:390.30px;top:497.27px;font-size:12.20px;color:#6b6b6b;letter-spacing:-0.326px;">mm</div>
<svg style="left:62.00px;top:529.10px;" width="15.6" height="12.4" viewBox="0 0 15.6 12.4"><rect x="0.6" y="0.6" width="14.4" height="3.4" fill="#a9adae" stroke="#323a3d" stroke-width="0.9"/><path d="M0.6 6.4 V11.8 M15 6.4 V11.8 M0.6 9.1 H15" fill="none" stroke="#323a3d" stroke-width="1"/></svg>
<div class="t" style="left:84.40px;top:528.74px;font-size:14.60px;color:#262e30;letter-spacing:-0.176px;font-weight:bold;">Line width</div>
<div class="abs" style="left:160.60px;top:535.00px;width:295.40px;height:1.00px;background:#e8e8e8;"></div>
<div class="t" style="left:81.60px;top:559.75px;font-size:14.00px;color:#323a3d;letter-spacing:0.257px;">Default</div>
<div class="abs" style="left:301.00px;top:553.30px;width:119.70px;height:24.40px;background:#fff;border:1px solid #cecece;box-sizing:border-box;"></div><div class="t" style="left:308.60px;top:558.75px;font-size:14.00px;color:#262e30;letter-spacing:0.350px;">0.42</div><div class="t" style="left:390.30px;top:561.27px;font-size:12.20px;color:#6b6b6b;letter-spacing:-0.326px;">mm</div>
<div class="t" style="left:81.60px;top:587.75px;font-size:14.00px;color:#323a3d;letter-spacing:0.115px;">Initial layer</div>
<div class="abs" style="left:301.00px;top:581.30px;width:119.70px;height:24.40px;background:#fff;border:1px solid #cecece;box-sizing:border-box;"></div><div class="t" style="left:308.60px;top:586.75px;font-size:14.00px;color:#262e30;letter-spacing:0.350px;">0.5</div><div class="t" style="left:390.30px;top:589.27px;font-size:12.20px;color:#6b6b6b;letter-spacing:-0.326px;">mm</div>
<div class="t" style="left:81.60px;top:615.75px;font-size:14.00px;color:#323a3d;letter-spacing:0.164px;">Outer wall</div>
<div class="abs" style="left:301.00px;top:609.30px;width:119.70px;height:24.40px;background:#fff;border:1px solid #cecece;box-sizing:border-box;"></div><div class="t" style="left:308.60px;top:614.75px;font-size:14.00px;color:#262e30;letter-spacing:0.350px;">0.42</div><div class="t" style="left:390.30px;top:617.27px;font-size:12.20px;color:#6b6b6b;letter-spacing:-0.326px;">mm</div>
<div class="t" style="left:81.60px;top:643.75px;font-size:14.00px;color:#323a3d;letter-spacing:0.076px;">Inner wall</div>
<div class="abs" style="left:301.00px;top:637.30px;width:119.70px;height:24.40px;background:#fff;border:1px solid #cecece;box-sizing:border-box;"></div><div class="t" style="left:308.60px;top:642.75px;font-size:14.00px;color:#262e30;letter-spacing:0.350px;">0.45</div><div class="t" style="left:390.30px;top:645.27px;font-size:12.20px;color:#6b6b6b;letter-spacing:-0.326px;">mm</div>
<div class="t" style="left:81.60px;top:671.75px;font-size:14.00px;color:#323a3d;letter-spacing:0.323px;">Top surface</div>
<div class="abs" style="left:301.00px;top:665.30px;width:119.70px;height:24.40px;background:#f0f0f0;border:1px solid #cecece;box-sizing:border-box;"></div><div class="t" style="left:308.60px;top:670.75px;font-size:14.00px;color:#acacac;letter-spacing:0.350px;">0.42</div><div class="t" style="left:390.30px;top:673.27px;font-size:12.20px;color:#8a8a8a;letter-spacing:-0.326px;">mm</div>
<div class="t" style="left:81.60px;top:699.75px;font-size:14.00px;color:#323a3d;letter-spacing:0.153px;">Sparse infill</div>
<div class="abs" style="left:301.00px;top:693.30px;width:119.70px;height:24.40px;background:#fff;border:1px solid #cecece;box-sizing:border-box;"></div><div class="t" style="left:308.60px;top:698.75px;font-size:14.00px;color:#262e30;letter-spacing:0.350px;">0.45</div><div class="t" style="left:390.30px;top:701.27px;font-size:12.20px;color:#6b6b6b;letter-spacing:-0.326px;">mm</div>
<div class="t" style="left:81.60px;top:727.75px;font-size:14.00px;color:#323a3d;letter-spacing:0.246px;">Internal solid infill</div>
<div class="abs" style="left:301.00px;top:721.30px;width:119.70px;height:24.40px;background:#fff;border:1px solid #cecece;box-sizing:border-box;"></div><div class="t" style="left:308.60px;top:726.75px;font-size:14.00px;color:#262e30;letter-spacing:0.350px;">0.42</div><div class="t" style="left:390.30px;top:729.27px;font-size:12.20px;color:#6b6b6b;letter-spacing:-0.326px;">mm</div>
<div class="t" style="left:81.60px;top:755.75px;font-size:14.00px;color:#323a3d;letter-spacing:0.411px;">Support</div>
<div class="abs" style="left:301.00px;top:749.30px;width:119.70px;height:24.40px;background:#fff;border:1px solid #cecece;box-sizing:border-box;"></div><div class="t" style="left:308.60px;top:754.75px;font-size:14.00px;color:#262e30;letter-spacing:0.350px;">0.42</div><div class="t" style="left:390.30px;top:757.27px;font-size:12.20px;color:#6b6b6b;letter-spacing:-0.326px;">mm</div>
<svg style="left:62.00px;top:788.20px;" width="14.6" height="14.6" viewBox="0 0 14.6 14.6"><rect x="0.6" y="0.6" width="13.4" height="13.4" rx="1" fill="#d9dbdc" stroke="#323a3d" stroke-width="1"/><path d="M3.6 11.4 V7.2 L7.4 3.6 H11" fill="none" stroke="#323a3d" stroke-width="0.9" stroke-dasharray="1.4 1.2"/></svg>
<div class="t" style="left:83.40px;top:788.74px;font-size:14.60px;color:#262e30;letter-spacing:-0.320px;font-weight:bold;">Seam</div>
<div class="abs" style="left:127.00px;top:795.00px;width:329.00px;height:1.00px;background:#e8e8e8;"></div>
<div class="t" style="left:81.60px;top:819.75px;font-size:14.00px;color:#f0693a;letter-spacing:0.190px;">Seam position</div>
<svg style="left:283.70px;top:818.70px;" width="14" height="14" viewBox="0 0 14 14"><path d="M2.2 9.2 A5.2 5.2 0 1 1 11.2 9.6" fill="none" stroke="#f0693a" stroke-width="1.1" stroke-linecap="round"/><path d="M9 8.6 L11.5 10.9 L13 7.8 Z" fill="#f0693a"/></svg>
<div class="abs" style="left:301.00px;top:813.30px;width:119.70px;height:24.40px;background:#fff;border:1px solid #cecece;box-sizing:border-box;"></div><svg style="left:309.00px;top:823.10px;" width="9" height="5.4" viewBox="0 0 9 5.4"><path d="M0.5 0.5 L4.5 4.4 L8.5 0.5" fill="none" stroke="#8c8c8c" stroke-width="1" stroke-linecap="round" stroke-linejoin="round"/></svg><div class="t" style="left:322.00px;top:818.95px;font-size:14.00px;color:#262e30;letter-spacing:0.120px;">Back</div>
<div class="t" style="left:81.60px;top:849.45px;font-size:14.00px;color:#323a3d;letter-spacing:0.235px;">Scarf joint seam</div>
<div class="t" style="left:81.60px;top:865.15px;font-size:14.00px;color:#323a3d;letter-spacing:0.225px;">(experimental)</div>
<div class="abs" style="left:301.00px;top:849.30px;width:119.70px;height:24.40px;background:#fff;border:1px solid #cecece;box-sizing:border-box;"></div><svg style="left:309.00px;top:859.10px;" width="9" height="5.4" viewBox="0 0 9 5.4"><path d="M0.5 0.5 L4.5 4.4 L8.5 0.5" fill="none" stroke="#8c8c8c" stroke-width="1" stroke-linecap="round" stroke-linejoin="round"/></svg><div class="t" style="left:322.00px;top:854.95px;font-size:14.00px;color:#262e30;letter-spacing:0.120px;">None</div>
<svg style="left:61.60px;top:895.70px;" width="15.6" height="15.6" viewBox="0 0 15.6 15.6"><rect x="2.6" y="2.6" width="10.4" height="10.4" rx="1" fill="#b9bdbe" stroke="#323a3d" stroke-width="1"/><path d="M7.8 0 V5 M7.8 10.6 V15.6 M0 7.8 H5 M10.6 7.8 H15.6" fill="none" stroke="#323a3d" stroke-width="1.1"/></svg>
<div class="t" style="left:83.40px;top:896.74px;font-size:14.60px;color:#262e30;letter-spacing:-0.279px;font-weight:bold;">Precision</div>
<div class="abs" style="left:152.50px;top:903.00px;width:303.50px;height:1.00px;background:#e8e8e8;"></div>
<div class="t" style="left:81.60px;top:927.75px;font-size:14.00px;color:#323a3d;letter-spacing:0.192px;">Slice gap closing radius</div>
<div class="abs" style="left:301.00px;top:921.30px;width:119.70px;height:24.40px;background:#fff;border:1px solid #cecece;box-sizing:border-box;"></div><div class="t" style="left:308.60px;top:926.75px;font-size:14.00px;color:#262e30;letter-spacing:0.350px;">0.049</div><div class="t" style="left:390.30px;top:929.27px;font-size:12.20px;color:#6b6b6b;letter-spacing:-0.326px;">mm</div>
<div class="t" style="left:81.60px;top:955.75px;font-size:14.00px;color:#323a3d;letter-spacing:0.127px;">Resolution</div>
<div class="abs" style="left:301.00px;top:949.30px;width:119.70px;height:24.40px;background:#fff;border:1px solid #cecece;box-sizing:border-box;"></div><div class="t" style="left:308.60px;top:954.75px;font-size:14.00px;color:#262e30;letter-spacing:0.350px;">0.012</div><div class="t" style="left:390.30px;top:957.27px;font-size:12.20px;color:#6b6b6b;letter-spacing:-0.326px;">mm</div>
<div class="t" style="left:81.60px;top:983.75px;font-size:14.00px;color:#323a3d;letter-spacing:0.475px;">Arc fitting</div>
<div class="abs" style="left:302.00px;top:982.10px;width:16.00px;height:16.00px;background:#00ae42;border-radius:2px;"></div><svg style="left:302.00px;top:982.10px;" width="16" height="16" viewBox="0 0 16 16"><path d="M3.4 8 L6.8 11.2 L12.6 4.8" fill="none" stroke="#fff" stroke-width="1.5" stroke-linecap="round" stroke-linejoin="round"/></svg>
<div class="t" style="left:81.60px;top:1011.75px;font-size:14.00px;color:#323a3d;letter-spacing:0.210px;">X-Y hole compensation</div>
<div class="abs" style="left:301.00px;top:1005.30px;width:119.70px;height:24.40px;background:#fff;border:1px solid #cecece;box-sizing:border-box;"></div><div class="t" style="left:308.60px;top:1010.75px;font-size:14.00px;color:#262e30;letter-spacing:0.350px;">0</div><div class="t" style="left:390.30px;top:1013.27px;font-size:12.20px;color:#6b6b6b;letter-spacing:-0.326px;">mm</div>
<div class="t" style="left:81.60px;top:1039.75px;font-size:14.00px;color:#323a3d;letter-spacing:0.273px;">X-Y contour compensation</div>
<div class="abs" style="left:301.00px;top:1033.30px;width:119.70px;height:24.40px;background:#fff;border:1px solid #cecece;box-sizing:border-box;"></div><div class="t" style="left:308.60px;top:1038.75px;font-size:14.00px;color:#262e30;letter-spacing:0.350px;">0</div><div class="t" style="left:390.30px;top:1041.27px;font-size:12.20px;color:#6b6b6b;letter-spacing:-0.326px;">mm</div>
<div class="t" style="left:81.60px;top:1067.75px;font-size:14.00px;color:#323a3d;letter-spacing:0.277px;">Elephant foot compensation</div>
<div class="abs" style="left:301.00px;top:1061.30px;width:119.70px;height:24.40px;background:#fff;border:1px solid #cecece;box-sizing:border-box;"></div><div class="t" style="left:308.60px;top:1066.75px;font-size:14.00px;color:#262e30;letter-spacing:0.350px;">0.15</div><div class="t" style="left:390.30px;top:1069.27px;font-size:12.20px;color:#6b6b6b;letter-spacing:-0.326px;">mm</div>
<div class="t" style="left:81.60px;top:1095.75px;font-size:14.00px;color:#323a3d;letter-spacing:0.183px;">Precise Z height</div>
<div class="abs" style="left:302.00px;top:1094.10px;width:16.00px;height:16.00px;background:#fff;border:1px solid #b8b8b8;border-radius:2px;box-sizing:border-box;"></div>
<svg style="left:62.00px;top:1129.10px;" width="16" height="12.4" viewBox="0 0 16 12.4"><path d="M1 8.8 L3.8 3.4 H12.6 V8.8 Z M5.6 3.4 L7 1 H15.6 M4.6 6 H10.2" fill="none" stroke="#323a3d" stroke-width="1" stroke-linejoin="round"/><path d="M0.4 11.2 H13.4" stroke="#323a3d" stroke-width="1.1"/></svg>
<div class="t" style="left:84.40px;top:1128.74px;font-size:14.60px;color:#262e30;letter-spacing:-0.161px;font-weight:bold;">Ironing</div>
<div class="abs" style="left:138.50px;top:1135.00px;width:317.50px;height:1.00px;background:#e8e8e8;"></div>
<div class="t" style="left:81.60px;top:1159.75px;font-size:14.00px;color:#323a3d;letter-spacing:0.209px;">Ironing Type</div>
<div class="abs" style="left:301.00px;top:1153.30px;width:119.70px;height:24.40px;background:#fff;border:1px solid #cecece;box-sizing:border-box;"></div><svg style="left:309.00px;top:1163.10px;" width="9" height="5.4" viewBox="0 0 9 5.4"><path d="M0.5 0.5 L4.5 4.4 L8.5 0.5" fill="none" stroke="#8c8c8c" stroke-width="1" stroke-linecap="round" stroke-linejoin="round"/></svg><div class="t" style="left:322.00px;top:1158.95px;font-size:14.00px;color:#262e30;letter-spacing:0.120px;">No ironing</div>
<svg style="left:62.00px;top:1192.50px;" width="16" height="14" viewBox="0 0 16 14"><path d="M1 1.6 C4 0.2 8 3 15 1.4 V12.8 C10 14.6 5 11.6 1 13 Z" fill="none" stroke="#323a3d" stroke-width="1" stroke-linejoin="round"/><path d="M4 5.4 H9 M5.2 8.4 H11" stroke="#323a3d" stroke-width="1"/></svg>
<div class="t" style="left:84.40px;top:1192.74px;font-size:14.60px;color:#262e30;letter-spacing:-0.067px;font-weight:bold;">Wall generator</div>
<div class="abs" style="left:190.00px;top:1199.00px;width:266.00px;height:1.00px;background:#e8e8e8;"></div>
<div class="t" style="left:81.60px;top:1223.75px;font-size:14.00px;color:#323a3d;letter-spacing:0.198px;">Wall generator</div>
<div class="abs" style="left:301.00px;top:1217.30px;width:119.70px;height:24.40px;background:#fff;border:1px solid #cecece;box-sizing:border-box;"></div><svg style="left:309.00px;top:1227.10px;" width="9" height="5.4" viewBox="0 0 9 5.4"><path d="M0.5 0.5 L4.5 4.4 L8.5 0.5" fill="none" stroke="#8c8c8c" stroke-width="1" stroke-linecap="round" stroke-linejoin="round"/></svg><div class="t" style="left:322.00px;top:1222.95px;font-size:14.00px;color:#262e30;letter-spacing:0.120px;">Classic</div>
<svg style="left:61.40px;top:1255.90px;" width="17" height="16" viewBox="0 0 17 16"><polygon points="11.80,6.20 11.61,7.65 10.01,8.40 9.31,9.31 9.00,11.05 7.65,11.61 6.20,10.60 5.06,10.45 3.40,11.05 2.24,10.16 2.39,8.40 1.95,7.34 0.60,6.20 0.79,4.75 2.39,4.00 3.09,3.09 3.40,1.35 4.75,0.79 6.20,1.80 7.34,1.95 9.00,1.35 10.16,2.24 10.01,4.00 10.45,5.06" fill="none" stroke="#323a3d" stroke-width="1"/><circle cx="6.2" cy="6.2" r="1.9" fill="none" stroke="#323a3d" stroke-width="1"/><polygon points="16.50,11.60 16.37,12.61 15.20,13.10 14.72,13.72 14.55,14.98 13.61,15.37 12.60,14.60 11.82,14.50 10.65,14.98 9.84,14.36 10.00,13.10 9.70,12.38 8.70,11.60 8.83,10.59 10.00,10.10 10.48,9.48 10.65,8.22 11.59,7.83 12.60,8.60 13.38,8.70 14.55,8.22 15.36,8.84 15.20,10.10 15.50,10.82" fill="#fff" stroke="#323a3d" stroke-width="1"/><circle cx="12.6" cy="11.6" r="1.2" fill="none" stroke="#323a3d" stroke-width="0.9"/></svg>
<div class="t" style="left:84.40px;top:1256.74px;font-size:14.60px;color:#262e30;letter-spacing:-0.254px;font-weight:bold;">Advanced</div>
<div class="abs" style="left:158.00px;top:1263.00px;width:298.00px;height:1.00px;background:#e8e8e8;"></div>
<div class="t" style="left:81.60px;top:1287.75px;font-size:14.00px;color:#323a3d;letter-spacing:0.226px;">Order of walls</div>
<div class="abs" style="left:301.00px;top:1281.30px;width:119.70px;height:24.40px;background:#fff;border:1px solid #cecece;box-sizing:border-box;"></div><svg style="left:309.00px;top:1291.10px;" width="9" height="5.4" viewBox="0 0 9 5.4"><path d="M0.5 0.5 L4.5 4.4 L8.5 0.5" fill="none" stroke="#8c8c8c" stroke-width="1" stroke-linecap="round" stroke-linejoin="round"/></svg><div class="t" style="left:322.00px;top:1286.95px;font-size:14.00px;color:#262e30;letter-spacing:0.120px;">inner/outer</div>
<div class="t" style="left:81.60px;top:1315.75px;font-size:14.00px;color:#323a3d;letter-spacing:0.333px;">Print infill first</div>
<div class="abs" style="left:302.00px;top:1314.10px;width:16.00px;height:16.00px;background:#fff;border:1px solid #b8b8b8;border-radius:2px;box-sizing:border-box;"></div>
<div class="abs" style="left:301.00px;top:1337.30px;width:119.70px;height:24.40px;background:#fff;border:1px solid #cecece;box-sizing:border-box;"></div><div class="t" style="left:308.60px;top:1342.75px;font-size:14.00px;color:#262e30;letter-spacing:0.350px;"></div><div class="t" style="left:390.30px;top:1345.27px;font-size:12.20px;color:#6b6b6b;letter-spacing:-0.326px;">mm</div>
<div class="abs" style="left:2073.50px;top:102.00px;width:418.10px;height:31.00px;background:rgba(26,26,27,0.92);"></div>
<div class="abs" style="left:2073.50px;top:133.00px;width:418.10px;height:446.40px;background:rgba(27,27,27,0.81);"></div>
<div class="abs" style="left:2073.50px;top:102.00px;width:418.10px;height:1.00px;background:rgba(80,80,86,0.9);"></div>
<div class="abs" style="left:2073.50px;top:102.00px;width:1.00px;height:477.40px;background:rgba(70,70,76,0.6);"></div>
<div class="abs" style="left:2073.50px;top:578.40px;width:418.10px;height:1.00px;background:rgba(70,70,76,0.6);"></div>
<div class="abs" style="left:2073.50px;top:133.00px;width:418.10px;height:21.20px;background:rgba(100,100,100,0.12);"></div>
<div class="abs" style="left:2073.50px;top:154.20px;width:418.10px;height:1.00px;background:#cfcfcf;"></div>
<div class="abs" style="left:2073.50px;top:458.60px;width:418.10px;height:1.00px;background:#cfcfcf;"></div>
<svg style="left:2086.40px;top:111.40px;" width="13" height="12" viewBox="0 0 13 12"><path d="M1 6 L6.4 1.2 L11.8 6 M1 10.8 L6.4 6 L11.8 10.8" fill="none" stroke="#fff" stroke-width="1.2" stroke-linejoin="round" stroke-linecap="round"/></svg>
<div class="t" style="left:2112.10px;top:110.83px;font-size:13.20px;color:#fff;letter-spacing:-0.524px;font-weight:bold;">Color Scheme</div>
<div class="abs" style="left:2204.50px;top:110.20px;width:197.10px;height:20.30px;background:#212121;border:1px solid #4a4a4f;border-radius:4px;box-sizing:border-box;"></div>
<svg style="left:2210.20px;top:118.40px;" width="10" height="6" viewBox="0 0 10 6"><path d="M0.8 0.8 L5 4.4 L9.2 0.8" fill="none" stroke="#fff" stroke-width="1.1" stroke-linecap="round" stroke-linejoin="round"/></svg>
<div class="t" style="left:2229.20px;top:114.00px;font-size:13.00px;color:#f2f2f2;letter-spacing:0.057px;">Line Type</div>
<div class="t" style="left:2085.40px;top:136.13px;font-size:13.20px;color:#fff;letter-spacing:-0.217px;font-weight:bold;">Line Type</div>
<div class="t" style="left:2211.30px;top:136.13px;font-size:13.20px;color:#fff;letter-spacing:-0.590px;font-weight:bold;">Time</div>
<div class="t" style="left:2273.30px;top:136.13px;font-size:13.20px;color:#fff;letter-spacing:-0.238px;font-weight:bold;">Percent</div>
<div class="t" style="left:2334.20px;top:136.13px;font-size:13.20px;color:#fff;letter-spacing:-0.188px;font-weight:bold;">Used filament</div>
<div class="t" style="left:2435.40px;top:136.13px;font-size:13.20px;color:#fff;letter-spacing:-0.426px;font-weight:bold;">Display</div>
<div class="abs" style="left:2086.00px;top:161.00px;width:9.00px;height:9.00px;background:#f8d94a;"></div>
<div class="t" style="left:2103.30px;top:160.06px;font-size:12.80px;color:#f2f2f2;letter-spacing:0.150px;">Inner wall</div>
<div class="t" style="left:2211.30px;top:160.06px;font-size:12.80px;color:#f2f2f2;">8m26s</div>
<div class="t" style="left:2273.30px;top:160.06px;font-size:12.80px;color:#f2f2f2;letter-spacing:-0.500px;">14.9%</div>
<div class="t" style="left:2334.20px;top:160.06px;font-size:12.80px;color:#f2f2f2;letter-spacing:-0.220px;">0.48 m</div>
<div class="t" style="left:2382.30px;top:160.06px;font-size:12.80px;color:#f2f2f2;letter-spacing:-0.100px;">1.45 g</div>
<div class="abs" style="left:2439.20px;top:158.00px;width:15.00px;height:15.00px;background:rgba(110,110,110,0.5);"></div>
<svg style="left:2439.50px;top:158.00px;" width="15" height="15" viewBox="0 0 15 15"><path d="M3.2 7.8 L6.2 10.8 L12 4.2" fill="none" stroke="#00c04a" stroke-width="2.1" stroke-linecap="round" stroke-linejoin="round"/></svg>
<div class="abs" style="left:2086.00px;top:182.00px;width:9.00px;height:9.00px;background:#f8772f;"></div>
<div class="t" style="left:2103.30px;top:181.06px;font-size:12.80px;color:#f2f2f2;letter-spacing:0.150px;">Outer wall</div>
<div class="t" style="left:2211.30px;top:181.06px;font-size:12.80px;color:#f2f2f2;">26m24s</div>
<div class="t" style="left:2273.30px;top:181.06px;font-size:12.80px;color:#f2f2f2;letter-spacing:-0.500px;">46.5%</div>
<div class="t" style="left:2334.20px;top:181.06px;font-size:12.80px;color:#f2f2f2;letter-spacing:-0.220px;">1.37 m</div>
<div class="t" style="left:2382.30px;top:181.06px;font-size:12.80px;color:#f2f2f2;letter-spacing:-0.100px;">4.20 g</div>
<div class="abs" style="left:2439.20px;top:179.00px;width:15.00px;height:15.00px;background:rgba(110,110,110,0.5);"></div>
<svg style="left:2439.50px;top:179.00px;" width="15" height="15" viewBox="0 0 15 15"><path d="M3.2 7.8 L6.2 10.8 L12 4.2" fill="none" stroke="#00c04a" stroke-width="2.1" stroke-linecap="round" stroke-linejoin="round"/></svg>
<div class="abs" style="left:2086.00px;top:203.00px;width:9.00px;height:9.00px;background:#2226f0;"></div>
<div class="t" style="left:2103.30px;top:202.06px;font-size:12.80px;color:#f2f2f2;letter-spacing:0.150px;">Overhang wall</div>
<div class="t" style="left:2211.30px;top:202.06px;font-size:12.80px;color:#f2f2f2;">1s</div>
<div class="t" style="left:2273.30px;top:202.06px;font-size:12.80px;color:#f2f2f2;letter-spacing:-0.500px;">&lt;0.1%</div>
<div class="t" style="left:2334.20px;top:202.06px;font-size:12.80px;color:#f2f2f2;letter-spacing:-0.220px;">0.00 m</div>
<div class="t" style="left:2382.30px;top:202.06px;font-size:12.80px;color:#f2f2f2;letter-spacing:-0.100px;">0.01 g</div>
<div class="abs" style="left:2439.20px;top:200.00px;width:15.00px;height:15.00px;background:rgba(110,110,110,0.5);"></div>
<svg style="left:2439.50px;top:200.00px;" width="15" height="15" viewBox="0 0 15 15"><path d="M3.2 7.8 L6.2 10.8 L12 4.2" fill="none" stroke="#00c04a" stroke-width="2.1" stroke-linecap="round" stroke-linejoin="round"/></svg>
<div class="abs" style="left:2086.00px;top:224.00px;width:9.00px;height:9.00px;background:#9a55d0;"></div>
<div class="t" style="left:2103.30px;top:223.06px;font-size:12.80px;color:#f2f2f2;letter-spacing:0.020px;">Internal solid infill</div>
<div class="t" style="left:2211.30px;top:223.06px;font-size:12.80px;color:#f2f2f2;">8s</div>
<div class="t" style="left:2273.30px;top:223.06px;font-size:12.80px;color:#f2f2f2;letter-spacing:-0.500px;">0.2%</div>
<div class="t" style="left:2334.20px;top:223.06px;font-size:12.80px;color:#f2f2f2;letter-spacing:-0.220px;">0.01 m</div>
<div class="t" style="left:2382.30px;top:223.06px;font-size:12.80px;color:#f2f2f2;letter-spacing:-0.100px;">0.02 g</div>
<div class="abs" style="left:2439.20px;top:221.00px;width:15.00px;height:15.00px;background:rgba(110,110,110,0.5);"></div>
<svg style="left:2439.50px;top:221.00px;" width="15" height="15" viewBox="0 0 15 15"><path d="M3.2 7.8 L6.2 10.8 L12 4.2" fill="none" stroke="#00c04a" stroke-width="2.1" stroke-linecap="round" stroke-linejoin="round"/></svg>
<div class="abs" style="left:2086.00px;top:245.00px;width:9.00px;height:9.00px;background:#4d80ba;"></div>
<div class="t" style="left:2103.30px;top:244.06px;font-size:12.80px;color:#f2f2f2;letter-spacing:0.150px;">Bridge</div>
<div class="t" style="left:2211.30px;top:244.06px;font-size:12.80px;color:#f2f2f2;">&lt;1s</div>
<div class="t" style="left:2273.30px;top:244.06px;font-size:12.80px;color:#f2f2f2;letter-spacing:-0.500px;">&lt;0.1%</div>
<div class="t" style="left:2334.20px;top:244.06px;font-size:12.80px;color:#f2f2f2;letter-spacing:-0.220px;">0.00 m</div>
<div class="t" style="left:2382.30px;top:244.06px;font-size:12.80px;color:#f2f2f2;letter-spacing:-0.100px;">0.00 g</div>
<div class="abs" style="left:2439.20px;top:242.00px;width:15.00px;height:15.00px;background:rgba(110,110,110,0.5);"></div>
<svg style="left:2439.50px;top:242.00px;" width="15" height="15" viewBox="0 0 15 15"><path d="M3.2 7.8 L6.2 10.8 L12 4.2" fill="none" stroke="#00c04a" stroke-width="2.1" stroke-linecap="round" stroke-linejoin="round"/></svg>
<div class="abs" style="left:2086.00px;top:266.00px;width:9.00px;height:9.00px;background:#ffffff;"></div>
<div class="t" style="left:2103.30px;top:265.06px;font-size:12.80px;color:#f2f2f2;letter-spacing:0.150px;">Gap infill</div>
<div class="t" style="left:2211.30px;top:265.06px;font-size:12.80px;color:#f2f2f2;">9m48s</div>
<div class="t" style="left:2273.30px;top:265.06px;font-size:12.80px;color:#f2f2f2;letter-spacing:-0.500px;">17.3%</div>
<div class="t" style="left:2334.20px;top:265.06px;font-size:12.80px;color:#f2f2f2;letter-spacing:-0.220px;">0.34 m</div>
<div class="t" style="left:2382.30px;top:265.06px;font-size:12.80px;color:#f2f2f2;letter-spacing:-0.100px;">1.05 g</div>
<div class="abs" style="left:2439.20px;top:263.00px;width:15.00px;height:15.00px;background:rgba(110,110,110,0.5);"></div>
<svg style="left:2439.50px;top:263.00px;" width="15" height="15" viewBox="0 0 15 15"><path d="M3.2 7.8 L6.2 10.8 L12 4.2" fill="none" stroke="#00c04a" stroke-width="2.1" stroke-linecap="round" stroke-linejoin="round"/></svg>
<div class="abs" style="left:2086.00px;top:287.00px;width:9.00px;height:9.00px;background:#003b78;"></div>
<div class="t" style="left:2103.30px;top:286.06px;font-size:12.80px;color:#f2f2f2;letter-spacing:0.150px;">Brim</div>
<div class="t" style="left:2211.30px;top:286.06px;font-size:12.80px;color:#f2f2f2;">45s</div>
<div class="t" style="left:2273.30px;top:286.06px;font-size:12.80px;color:#f2f2f2;letter-spacing:-0.500px;">1.3%</div>
<div class="t" style="left:2334.20px;top:286.06px;font-size:12.80px;color:#f2f2f2;letter-spacing:-0.220px;">0.07 m</div>
<div class="t" style="left:2382.30px;top:286.06px;font-size:12.80px;color:#f2f2f2;letter-spacing:-0.100px;">0.20 g</div>
<div class="abs" style="left:2439.20px;top:284.00px;width:15.00px;height:15.00px;background:rgba(110,110,110,0.5);"></div>
<svg style="left:2439.50px;top:284.00px;" width="15" height="15" viewBox="0 0 15 15"><path d="M3.2 7.8 L6.2 10.8 L12 4.2" fill="none" stroke="#00c04a" stroke-width="2.1" stroke-linecap="round" stroke-linejoin="round"/></svg>
<div class="abs" style="left:2086.00px;top:308.00px;width:9.00px;height:9.00px;background:#5ed195;"></div>
<div class="t" style="left:2103.30px;top:307.06px;font-size:12.80px;color:#f2f2f2;letter-spacing:0.150px;">Custom</div>
<div class="t" style="left:2211.30px;top:307.06px;font-size:12.80px;color:#f2f2f2;">6m3s</div>
<div class="t" style="left:2273.30px;top:307.06px;font-size:12.80px;color:#f2f2f2;letter-spacing:-0.500px;">10.7%</div>
<div class="t" style="left:2334.20px;top:307.06px;font-size:12.80px;color:#f2f2f2;letter-spacing:-0.220px;">0.03 m</div>
<div class="t" style="left:2382.30px;top:307.06px;font-size:12.80px;color:#f2f2f2;letter-spacing:-0.100px;">0.10 g</div>
<div class="abs" style="left:2439.20px;top:305.00px;width:15.00px;height:15.00px;background:rgba(110,110,110,0.5);"></div>
<svg style="left:2439.50px;top:305.00px;" width="15" height="15" viewBox="0 0 15 15"><path d="M3.2 7.8 L6.2 10.8 L12 4.2" fill="none" stroke="#00c04a" stroke-width="2.1" stroke-linecap="round" stroke-linejoin="round"/></svg>
<div class="abs" style="left:2086.00px;top:329.00px;width:9.00px;height:9.00px;background:#38489b;"></div>
<div class="t" style="left:2103.30px;top:328.06px;font-size:12.80px;color:#f2f2f2;letter-spacing:0.150px;">Travel</div>
<div class="t" style="left:2211.30px;top:328.06px;font-size:12.80px;color:#f2f2f2;">5m24s</div>
<div class="t" style="left:2273.30px;top:328.06px;font-size:12.80px;color:#f2f2f2;letter-spacing:-0.500px;">9.5%</div>
<div class="abs" style="left:2439.20px;top:326.00px;width:15.00px;height:15.00px;background:rgba(110,110,110,0.5);"></div>
<div class="abs" style="left:2086.00px;top:350.00px;width:9.00px;height:9.00px;background:#d224d2;"></div>
<div class="t" style="left:2103.30px;top:349.06px;font-size:12.80px;color:#f2f2f2;letter-spacing:0.150px;">Retract</div>
<div class="abs" style="left:2439.20px;top:347.00px;width:15.00px;height:15.00px;background:rgba(110,110,110,0.5);"></div>
<div class="abs" style="left:2086.00px;top:371.00px;width:9.00px;height:9.00px;background:#44b0d4;"></div>
<div class="t" style="left:2103.30px;top:370.06px;font-size:12.80px;color:#f2f2f2;letter-spacing:0.150px;">Unretract</div>
<div class="abs" style="left:2439.20px;top:368.00px;width:15.00px;height:15.00px;background:rgba(110,110,110,0.5);"></div>
<div class="abs" style="left:2086.00px;top:392.00px;width:9.00px;height:9.00px;background:#fbf80c;"></div>
<div class="t" style="left:2103.30px;top:391.06px;font-size:12.80px;color:#f2f2f2;letter-spacing:0.150px;">Wipe</div>
<div class="abs" style="left:2439.20px;top:389.00px;width:15.00px;height:15.00px;background:rgba(110,110,110,0.5);"></div>
<div class="abs" style="left:2086.00px;top:413.00px;width:9.00px;height:9.00px;background:#e6e6e6;"></div>
<div class="t" style="left:2103.30px;top:412.06px;font-size:12.80px;color:#f2f2f2;letter-spacing:0.150px;">Seams</div>
<div class="abs" style="left:2439.20px;top:410.00px;width:15.00px;height:15.00px;background:rgba(110,110,110,0.5);"></div>
<svg style="left:2439.50px;top:410.00px;" width="15" height="15" viewBox="0 0 15 15"><path d="M3.2 7.8 L6.2 10.8 L12 4.2" fill="none" stroke="#00c04a" stroke-width="2.1" stroke-linecap="round" stroke-linejoin="round"/></svg>
<div class="t" style="left:2085.40px;top:440.93px;font-size:13.20px;color:#fff;letter-spacing:-0.146px;font-weight:bold;">Total Estimation</div>
<div class="t" style="left:2085.40px;top:464.86px;font-size:12.80px;color:#f2f2f2;letter-spacing:0.219px;">Total Filament:</div>
<div class="t" style="left:2209.30px;top:464.86px;font-size:12.80px;color:#f2f2f2;letter-spacing:-0.150px;">2.30 m</div>
<div class="t" style="left:2264.10px;top:464.86px;font-size:12.80px;color:#f2f2f2;letter-spacing:-0.150px;">7.03 g</div>
<div class="t" style="left:2085.40px;top:483.90px;font-size:12.80px;color:#f2f2f2;letter-spacing:0.139px;">Model Filament:</div>
<div class="t" style="left:2209.30px;top:483.90px;font-size:12.80px;color:#f2f2f2;letter-spacing:-0.150px;">2.30 m</div>
<div class="t" style="left:2264.10px;top:483.90px;font-size:12.80px;color:#f2f2f2;letter-spacing:-0.150px;">7.03 g</div>
<div class="t" style="left:2085.40px;top:502.94px;font-size:12.80px;color:#f2f2f2;letter-spacing:-0.094px;">Cost:</div>
<div class="t" style="left:2209.30px;top:502.94px;font-size:12.80px;color:#f2f2f2;letter-spacing:-0.150px;">4.64</div>
<div class="t" style="left:2085.40px;top:521.98px;font-size:12.80px;color:#f2f2f2;letter-spacing:0.097px;">Prepare time:</div>
<div class="t" style="left:2209.30px;top:521.98px;font-size:12.80px;color:#f2f2f2;letter-spacing:-0.150px;">5m47s</div>
<div class="t" style="left:2085.40px;top:541.02px;font-size:12.80px;color:#f2f2f2;letter-spacing:0.332px;">Model printing time:</div>
<div class="t" style="left:2209.30px;top:541.02px;font-size:12.80px;color:#f2f2f2;letter-spacing:-0.150px;">50m58s</div>
<div class="t" style="left:2085.40px;top:560.06px;font-size:12.80px;color:#f2f2f2;letter-spacing:0.327px;">Total time:</div>
<div class="t" style="left:2209.30px;top:560.06px;font-size:12.80px;color:#f2f2f2;letter-spacing:-0.150px;">56m46s</div>
<div class="abs" style="left:2570.10px;top:262.00px;width:23.80px;height:916.50px;background:#fff;border-radius:11.9px;"></div>
<div class="abs" style="left:2576.00px;top:262.00px;width:11.90px;height:916.50px;background:#00ae42;"></div>
<div class="abs" style="left:2570.10px;top:250.30px;width:23.80px;height:23.80px;background:#00ae42;border-radius:50%;border:2px solid #fff;box-sizing:border-box;"></div>
<svg style="left:2576.00px;top:256.20px;" width="12" height="12" viewBox="0 0 12 12"><path d="M6 0 V12 M0 6 H12" stroke="#fff" stroke-width="0.9"/></svg>
<div class="abs" style="left:2570.10px;top:1166.60px;width:23.80px;height:23.80px;background:#00ae42;border-radius:50%;border:2px solid #fff;box-sizing:border-box;"></div>
<div class="abs" style="left:2518.00px;top:227.90px;width:42.80px;height:34.00px;background:#fff;border-radius:1.5px;"></div>
<svg style="left:2555.00px;top:250.00px;" width="16" height="14" viewBox="0 0 16 14"><path d="M0 0 L5.8 5.6 L13.1 11.9 L0 11.9 Z" fill="#fff"/></svg>
<div class="t" style="left:2540.80px;width:0;display:flex;justify-content:center;top:231.19px;font-size:12.30px;color:#1fb155;"><span>230</span></div>
<div class="t" style="left:2538.80px;width:0;display:flex;justify-content:center;top:246.19px;font-size:12.30px;color:#1fb155;"><span>46.00</span></div>
<div class="abs" style="left:2522.10px;top:1179.20px;width:38.80px;height:33.70px;background:#fff;border-radius:1.5px;"></div>
<svg style="left:2550.00px;top:1176.00px;" width="20" height="12" viewBox="0 0 20 12"><path d="M2.3 3.2 L18.8 1.9 L10.9 10.5 L2.3 10.5 Z" fill="#fff"/></svg>
<div class="t" style="left:2544.30px;width:0;display:flex;justify-content:center;top:1181.09px;font-size:12.30px;color:#1fb155;"><span>1</span></div>
<div class="t" style="left:2542.60px;width:0;display:flex;justify-content:center;top:1195.89px;font-size:12.30px;color:#1fb155;"><span>0.20</span></div>
<div class="abs" style="left:907.50px;top:1291.90px;width:1226.20px;height:23.80px;background:#fff;border-radius:11.9px;"></div>
<div class="abs" style="left:913.60px;top:1297.90px;width:1208.00px;height:11.90px;background:#00ae42;border-radius:6px 0 0 6px;"></div>
<div class="abs" style="left:2109.90px;top:1291.90px;width:23.80px;height:23.80px;background:#00ae42;border-radius:50%;border:2px solid #fff;box-sizing:border-box;"></div>
<div class="abs" style="left:2142.20px;top:1294.50px;width:17.60px;height:18.70px;background:#fff;border-radius:1.5px;"></div>
<svg style="left:2136.60px;top:1299.00px;" width="6" height="10" viewBox="0 0 6 10"><path d="M6 0.6 L0.6 4.8 L6 9" fill="#fff"/></svg>
<div class="t" style="left:2151.00px;width:0;display:flex;justify-content:center;top:1298.09px;font-size:12.30px;color:#1fb155;"><span>5</span></div>
<svg style="left:2570.80px;top:1294.30px;" width="22.5" height="20.5" viewBox="0 0 22.5 20.5"><g stroke="#fff" stroke-width="0.8" stroke-linejoin="round" fill="#00ae42"><polygon points="11.25,8.6 22,14 11.25,19.4 0.5,14"/><polygon points="11.25,4.7 22,10.1 11.25,15.5 0.5,10.1"/><polygon points="11.25,0.6 22,6 11.25,11.4 0.5,6"/></g></svg>
</div></body></html>
